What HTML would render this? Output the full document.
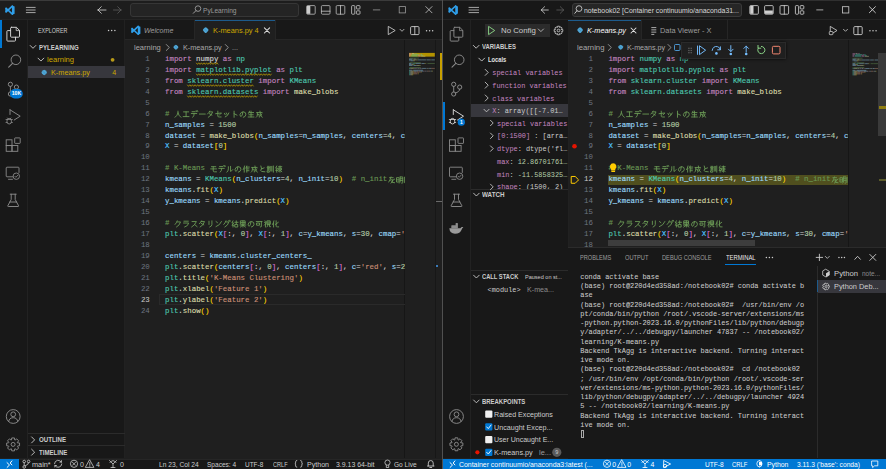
<!DOCTYPE html>
<html><head><meta charset="utf-8">
<style>
*{margin:0;padding:0;box-sizing:border-box}
html,body{width:886px;height:469px;overflow:hidden;background:#181818}
body{position:relative;font-family:"Liberation Sans",sans-serif;color:#cccccc}
.a{position:absolute}
.tx{position:absolute;white-space:pre}
svg{position:absolute;overflow:visible}
.ln{position:absolute;-webkit-text-stroke:0.12px currentColor;white-space:pre;font-family:"Liberation Mono",monospace;font-size:7.42px;line-height:10.97px;height:10.97px;color:#d4d4d4}
.num{position:absolute;text-align:right;font-family:"Liberation Mono",monospace;font-size:7.42px;line-height:10.97px;height:10.97px;color:#6e7681}
.k{color:#c586c0}.t{color:#4ec9b0}.v{color:#9cdcfe}.f{color:#dcdcaa}.n{color:#b5cea8}.s{color:#ce9178}.c{color:#6a9955}.b1{color:#ffd700}.b2{color:#da70d6}.b3{color:#179fff}.cst{color:#4fc1ff}
.m{font-family:"Liberation Mono",monospace}
</style></head><body>
<div class="a" style="left:0px;top:0px;width:442px;height:469px;background:#1f1f1f;"></div><div class="a" style="left:0px;top:0px;width:442px;height:20px;background:#1d1d1d;"></div><div class="a" style="left:0px;top:0px;width:442px;height:1px;background:#3b3b3b;"></div><div class="a" style="left:0px;top:19px;width:442px;height:1px;background:#242424;"></div><div class="a" style="left:0px;top:20px;width:27px;height:438px;background:#181818;"></div><div class="a" style="left:0px;top:20px;width:1.5px;height:28px;background:#0078d4;"></div><div class="a" style="left:27px;top:20px;width:98px;height:438px;background:#181818;"></div><div class="a" style="left:124px;top:20px;width:1px;height:438px;background:#212121;"></div><div class="a" style="left:125px;top:20px;width:317px;height:20px;background:#181818;"></div><div class="a" style="left:125px;top:39px;width:317px;height:1px;background:#262626;"></div><div class="a" style="left:194px;top:20px;width:80.5px;height:20px;background:#1f1f1f;"></div><div class="a" style="left:194px;top:19.8px;width:80.5px;height:1.6px;background:#1d5b8c;"></div><div class="a" style="left:193.5px;top:20px;width:0.8px;height:20px;background:#262626;"></div><div class="a" style="left:274.5px;top:20px;width:0.8px;height:20px;background:#262626;"></div><div class="a" style="left:0px;top:458.6px;width:442px;height:11px;background:#181818;"></div><div class="a" style="left:0px;top:458.6px;width:442px;height:0.8px;background:#262626;"></div><div class="a" style="left:0px;top:458.6px;width:19.3px;height:11px;background:#0078d4;"></div><div class="a" style="left:27px;top:65.5px;width:97.5px;height:12.7px;background:#37373d;"></div><div class="a" style="left:27px;top:433px;width:98px;height:1px;background:#2b2b2b;"></div><div class="a" style="left:27px;top:445px;width:98px;height:1px;background:#2b2b2b;"></div><div class="a" style="left:129.5px;top:3px;width:169px;height:14px;background:#242424;border:1px solid #363636;border-radius:3px;"></div><div class="a" style="left:404px;top:40px;width:1px;height:418px;background:#161616;"></div><div class="a" style="left:435px;top:40px;width:1px;height:418px;background:#171717;"></div><div class="a" style="left:440.3px;top:53.2px;width:1.8px;height:26.8px;background:#c8a000;"></div><div class="a" style="left:436px;top:200.6px;width:6px;height:1.2px;background:#6a6a6a;"></div><div class="a" style="left:436.2px;top:265px;width:1.4px;height:2.2px;background:#3a7ab8;"></div><div class="a" style="left:158.5px;top:294.255px;width:246px;height:10.97px;background:transparent;border:1px solid #2a2a2a;border-right:none;"></div><div class="tx" style="left:203.30px;top:4.60px;font-size:6.8px;line-height:12px;color:#9a9a9a;transform:scaleX(0.974);transform-origin:0 0;">PyLearning</div><div class="tx" style="left:38.40px;top:24.80px;font-size:6.5px;line-height:12px;color:#cccccc;transform:scaleX(0.830);transform-origin:0 0;">EXPLORER</div><div class="tx" style="left:38.80px;top:41.50px;font-size:6.5px;line-height:12px;color:#cccccc;font-weight:bold;transform:scaleX(0.932);transform-origin:0 0;">PYLEARNING</div><div class="tx" style="left:46.70px;top:54.20px;font-size:7.4px;line-height:12px;color:#cca700;transform:scaleX(1.029);transform-origin:0 0;">learning</div><div class="tx" style="left:51.20px;top:66.90px;font-size:7.3px;line-height:12px;color:#cca700;transform:scaleX(1.001);transform-origin:0 0;">K-means.py</div><div class="tx" style="left:112.20px;top:66.90px;font-size:7.1px;line-height:12px;color:#cca700;">4</div><div class="tx" style="left:38.60px;top:433.70px;font-size:6.5px;line-height:12px;color:#cccccc;font-weight:bold;transform:scaleX(0.946);transform-origin:0 0;">OUTLINE</div><div class="tx" style="left:38.60px;top:446.60px;font-size:6.5px;line-height:12px;color:#cccccc;font-weight:bold;transform:scaleX(0.936);transform-origin:0 0;">TIMELINE</div><div class="tx" style="left:144.40px;top:25.10px;font-size:7.1px;line-height:12px;color:#9d9d9d;font-style:italic;transform:scaleX(0.998);transform-origin:0 0;">Welcome</div><div class="tx" style="left:213.00px;top:25.10px;font-size:7.3px;line-height:12px;color:#cca700;transform:scaleX(1.015);transform-origin:0 0;">K-means.py 4</div><div class="tx" style="left:134.40px;top:42.10px;font-size:7.2px;line-height:12px;color:#a9a9a9;transform:scaleX(1.046);transform-origin:0 0;">learning</div><div class="tx" style="left:183.20px;top:42.10px;font-size:7.2px;line-height:12px;color:#a9a9a9;transform:scaleX(1.010);transform-origin:0 0;">K-means.py</div><div class="tx" style="left:232.00px;top:42.10px;font-size:7.2px;line-height:12px;color:#a9a9a9;">...</div><div class="tx" style="left:32.30px;top:458.90px;font-size:7.0px;line-height:11px;color:#cccccc;transform:scaleX(1.045);transform-origin:0 0;">main*</div><div class="tx" style="left:80.00px;top:458.90px;font-size:7.0px;line-height:11px;color:#cccccc;">0</div><div class="tx" style="left:96.00px;top:458.90px;font-size:7.0px;line-height:11px;color:#cccccc;">4</div><div class="tx" style="left:120.00px;top:458.90px;font-size:7.0px;line-height:11px;color:#cccccc;">0</div><div class="tx" style="left:158.90px;top:458.90px;font-size:7.0px;line-height:11px;color:#cccccc;transform:scaleX(0.953);transform-origin:0 0;">Ln 23, Col 24</div><div class="tx" style="left:206.90px;top:458.90px;font-size:7.0px;line-height:11px;color:#cccccc;transform:scaleX(0.935);transform-origin:0 0;">Spaces: 4</div><div class="tx" style="left:244.80px;top:458.90px;font-size:7.0px;line-height:11px;color:#cccccc;transform:scaleX(0.918);transform-origin:0 0;">UTF-8</div><div class="tx" style="left:272.50px;top:458.90px;font-size:7.0px;line-height:11px;color:#cccccc;transform:scaleX(0.799);transform-origin:0 0;">CRLF</div><div class="tx" style="left:306.50px;top:458.90px;font-size:7.0px;line-height:11px;color:#cccccc;transform:scaleX(1.009);transform-origin:0 0;">Python</div><div class="tx" style="left:336.30px;top:458.90px;font-size:7.0px;line-height:11px;color:#cccccc;transform:scaleX(0.989);transform-origin:0 0;">3.9.13 64-bit</div><div class="tx" style="left:393.60px;top:458.90px;font-size:7.0px;line-height:11px;color:#cccccc;transform:scaleX(0.941);transform-origin:0 0;">Go Live</div><div class="a" style="left:125px;top:40px;width:279.5px;height:418px;overflow:hidden"><div class="num" style="left:4.80px;width:20px;top:13.72px;color:#6e7681">1</div><div class="ln" style="left:40.00px;top:13.72px;"><span class="k">import</span> numpy <span class="k">as</span> <span class="t">np</span></div><div class="num" style="left:4.80px;width:20px;top:24.69px;color:#6e7681">2</div><div class="ln" style="left:40.00px;top:24.69px;"><span class="k">import</span> <span class="t">matplotlib.pyplot</span> <span class="k">as</span> <span class="t">plt</span></div><div class="num" style="left:4.80px;width:20px;top:35.66px;color:#6e7681">3</div><div class="ln" style="left:40.00px;top:35.66px;"><span class="k">from</span> <span class="t">sklearn.cluster</span> <span class="k">import</span> <span class="t">KMeans</span></div><div class="num" style="left:4.80px;width:20px;top:46.63px;color:#6e7681">4</div><div class="ln" style="left:40.00px;top:46.63px;"><span class="k">from</span> <span class="t">sklearn.datasets</span> <span class="k">import</span> <span class="f">make_blobs</span></div><div class="num" style="left:4.80px;width:20px;top:57.60px;color:#6e7681">5</div><div class="num" style="left:4.80px;width:20px;top:68.57px;color:#6e7681">6</div><div class="ln" style="left:40.00px;top:68.57px;"><span class="c"># </span></div><div class="num" style="left:4.80px;width:20px;top:79.54px;color:#6e7681">7</div><div class="ln" style="left:40.00px;top:79.54px;"><span class="v">n_samples</span> = <span class="n">1500</span></div><div class="num" style="left:4.80px;width:20px;top:90.50px;color:#6e7681">8</div><div class="ln" style="left:40.00px;top:90.50px;"><span class="v">dataset</span> = <span class="f">make_blobs</span><span class="b1">(</span><span class="v">n_samples</span>=<span class="v">n_samples</span>, <span class="v">centers</span>=<span class="n">4</span>, <span class="v">cluster_std</span>=<span class="n">0.60</span><span class="b1">)</span></div><div class="num" style="left:4.80px;width:20px;top:101.47px;color:#6e7681">9</div><div class="ln" style="left:40.00px;top:101.47px;"><span class="cst">X</span> = <span class="v">dataset</span><span class="b1">[</span><span class="n">0</span><span class="b1">]</span></div><div class="num" style="left:4.80px;width:20px;top:112.44px;color:#6e7681">10</div><div class="num" style="left:4.80px;width:20px;top:123.41px;color:#6e7681">11</div><div class="ln" style="left:40.00px;top:123.41px;"><span class="c"># K-Means </span></div><div class="num" style="left:4.80px;width:20px;top:134.38px;color:#6e7681">12</div><div class="ln" style="left:40.00px;top:134.38px;"><span class="v">kmeans</span> = <span class="t">KMeans</span><span class="b1">(</span><span class="v">n_clusters</span>=<span class="n">4</span>, <span class="v">n_init</span>=<span class="n">10</span><span class="b1">)</span>  <span class="c"># n_init</span></div><div class="num" style="left:4.80px;width:20px;top:145.36px;color:#6e7681">13</div><div class="ln" style="left:40.00px;top:145.36px;"><span class="v">kmeans</span>.<span class="f">fit</span><span class="b1">(</span><span class="cst">X</span><span class="b1">)</span></div><div class="num" style="left:4.80px;width:20px;top:156.32px;color:#6e7681">14</div><div class="ln" style="left:40.00px;top:156.32px;"><span class="v">y_kmeans</span> = <span class="v">kmeans</span>.<span class="f">predict</span><span class="b1">(</span><span class="cst">X</span><span class="b1">)</span></div><div class="num" style="left:4.80px;width:20px;top:167.30px;color:#6e7681">15</div><div class="num" style="left:4.80px;width:20px;top:178.26px;color:#6e7681">16</div><div class="ln" style="left:40.00px;top:178.26px;"><span class="c"># </span></div><div class="num" style="left:4.80px;width:20px;top:189.24px;color:#6e7681">17</div><div class="ln" style="left:40.00px;top:189.24px;"><span class="t">plt</span>.<span class="f">scatter</span><span class="b1">(</span><span class="cst">X</span><span class="b2">[</span>:, <span class="n">0</span><span class="b2">]</span>, <span class="cst">X</span><span class="b2">[</span>:, <span class="n">1</span><span class="b2">]</span>, <span class="v">c</span>=<span class="v">y_kmeans</span>, <span class="v">s</span>=<span class="n">30</span>, <span class="v">cmap</span>=<span class="s">&#x27;viridis&#x27;</span><span class="b1">)</span></div><div class="num" style="left:4.80px;width:20px;top:200.20px;color:#6e7681">18</div><div class="num" style="left:4.80px;width:20px;top:211.18px;color:#6e7681">19</div><div class="ln" style="left:40.00px;top:211.18px;"><span class="v">centers</span> = <span class="v">kmeans</span>.<span class="v">cluster_centers_</span></div><div class="num" style="left:4.80px;width:20px;top:222.14px;color:#6e7681">20</div><div class="ln" style="left:40.00px;top:222.14px;"><span class="t">plt</span>.<span class="f">scatter</span><span class="b1">(</span><span class="v">centers</span><span class="b2">[</span>:, <span class="n">0</span><span class="b2">]</span>, <span class="v">centers</span><span class="b2">[</span>:, <span class="n">1</span><span class="b2">]</span>, <span class="v">c</span>=<span class="s">&#x27;red&#x27;</span>, <span class="v">s</span>=<span class="n">200</span><span class="b1">)</span></div><div class="num" style="left:4.80px;width:20px;top:233.12px;color:#6e7681">21</div><div class="ln" style="left:40.00px;top:233.12px;"><span class="t">plt</span>.<span class="f">title</span><span class="b1">(</span><span class="s">&#x27;K-Means Clustering&#x27;</span><span class="b1">)</span></div><div class="num" style="left:4.80px;width:20px;top:244.08px;color:#6e7681">22</div><div class="ln" style="left:40.00px;top:244.08px;"><span class="t">plt</span>.<span class="f">xlabel</span><span class="b1">(</span><span class="s">&#x27;Feature 1&#x27;</span><span class="b1">)</span></div><div class="num" style="left:4.80px;width:20px;top:255.06px;color:#cccccc">23</div><div class="ln" style="left:40.00px;top:255.06px;"><span class="t">plt</span>.<span class="f">ylabel</span><span class="b1">(</span><span class="s">&#x27;Feature 2&#x27;</span><span class="b1">)</span></div><div class="num" style="left:4.80px;width:20px;top:266.02px;color:#6e7681">24</div><div class="ln" style="left:40.00px;top:266.02px;"><span class="t">plt</span>.<span class="f">show</span><span class="b1">()</span></div><svg width="280" height="418" style="left:0;top:0"><path transform="translate(49.32,70.40) scale(0.730)" d="M5 1 V3 Q4.5 7 1 9.5 M5 3 Q5.5 7 9 9.5" stroke="#6a9955" stroke-width="1.23" fill="none" stroke-linecap="round" stroke-linejoin="round"/><path transform="translate(57.44,70.40) scale(0.730)" d="M1.5 2 H8.5 M5 2 V8.5 M1 8.5 H9" stroke="#6a9955" stroke-width="1.23" fill="none" stroke-linecap="round" stroke-linejoin="round"/><path transform="translate(65.56,70.40) scale(0.730)" d="M2 1.8 H6.5 M1 4.3 H8.5 M5 4.3 Q5 8 3 9.5 M7.8 0.4 L8.5 1.8 M9.2 0.2 L9.9 1.5" stroke="#6a9955" stroke-width="1.23" fill="none" stroke-linecap="round" stroke-linejoin="round"/><path transform="translate(73.68,70.40) scale(0.730)" d="M1 5 H9" stroke="#6a9955" stroke-width="1.23" fill="none" stroke-linecap="round" stroke-linejoin="round"/><path transform="translate(81.80,70.40) scale(0.730)" d="M4 1 Q3 3 1 5 M3.5 2 H8 Q7 6.5 2 9.5 M3.5 4.5 L7 6.5" stroke="#6a9955" stroke-width="1.23" fill="none" stroke-linecap="round" stroke-linejoin="round"/><path transform="translate(89.92,70.40) scale(0.730)" d="M1 4.5 L9 3.5 Q8 5 6.5 6 M4 1 V8 Q4 9 6 9 H8.5" stroke="#6a9955" stroke-width="1.23" fill="none" stroke-linecap="round" stroke-linejoin="round"/><path transform="translate(98.04,70.40) scale(0.730)" d="M2 4 L3 6 M4.5 3.5 L5.5 5.5 M8 3.5 Q7 7.5 3 9" stroke="#6a9955" stroke-width="1.23" fill="none" stroke-linecap="round" stroke-linejoin="round"/><path transform="translate(106.16,70.40) scale(0.730)" d="M4 1 V9.5 M4 4.5 L8 6.5" stroke="#6a9955" stroke-width="1.23" fill="none" stroke-linecap="round" stroke-linejoin="round"/><path transform="translate(114.28,70.40) scale(0.730)" d="M5 2 Q4.5 7.5 2.5 8.5 Q0.8 8 1 5.5 Q1.8 2 6 2 Q9.5 2.5 9 6 Q8.5 9 5.5 9.5" stroke="#6a9955" stroke-width="1.23" fill="none" stroke-linecap="round" stroke-linejoin="round"/><path transform="translate(122.40,70.40) scale(0.730)" d="M3 1 L1.5 4 M2.5 3 H8.5 M5 1 V9 M2 6 H8 M1 9 H9" stroke="#6a9955" stroke-width="1.23" fill="none" stroke-linecap="round" stroke-linejoin="round"/><path transform="translate(130.52,70.40) scale(0.730)" d="M1.5 3 H9 M2.5 3 V6 Q2.5 8.5 1 9.5 M2.5 5.5 H5 V8 M6 1 Q6 7 9 9.5 M8.5 5 Q7 8 5 9.5" stroke="#6a9955" stroke-width="1.23" fill="none" stroke-linecap="round" stroke-linejoin="round"/><path transform="translate(84.94,125.25) scale(0.730)" d="M2 2 H8 M1 5 H9 M4.5 2 V8 Q4.5 9 6.5 9 H9" stroke="#6a9955" stroke-width="1.23" fill="none" stroke-linecap="round" stroke-linejoin="round"/><path transform="translate(93.06,125.25) scale(0.730)" d="M2 1.8 H6.5 M1 4.3 H8.5 M5 4.3 Q5 8 3 9.5 M7.8 0.4 L8.5 1.8 M9.2 0.2 L9.9 1.5" stroke="#6a9955" stroke-width="1.23" fill="none" stroke-linecap="round" stroke-linejoin="round"/><path transform="translate(101.18,125.25) scale(0.730)" d="M3 2 V5 Q3 8 1 9.5 M6 1.5 V8.5 Q7.5 8 9 6" stroke="#6a9955" stroke-width="1.23" fill="none" stroke-linecap="round" stroke-linejoin="round"/><path transform="translate(109.30,125.25) scale(0.730)" d="M5 2 Q4.5 7.5 2.5 8.5 Q0.8 8 1 5.5 Q1.8 2 6 2 Q9.5 2.5 9 6 Q8.5 9 5.5 9.5" stroke="#6a9955" stroke-width="1.23" fill="none" stroke-linecap="round" stroke-linejoin="round"/><path transform="translate(117.42,125.25) scale(0.730)" d="M3 1 Q2.5 4 1 6 M2.5 3.5 V9.5 M6 1 Q5.5 3 4.5 4 M5.5 2.5 H9.5 M6 2.5 V9.5 M6 5 H9 M6 7.5 H9" stroke="#6a9955" stroke-width="1.23" fill="none" stroke-linecap="round" stroke-linejoin="round"/><path transform="translate(125.54,125.25) scale(0.730)" d="M1.5 3 H9 M2.5 3 V6 Q2.5 8.5 1 9.5 M2.5 5.5 H5 V8 M6 1 Q6 7 9 9.5 M8.5 5 Q7 8 5 9.5" stroke="#6a9955" stroke-width="1.23" fill="none" stroke-linecap="round" stroke-linejoin="round"/><path transform="translate(133.66,125.25) scale(0.730)" d="M3 1 L4 5 M7.5 3.5 Q3 4.5 2.5 7 Q3 9 8.5 9" stroke="#6a9955" stroke-width="1.23" fill="none" stroke-linecap="round" stroke-linejoin="round"/><path transform="translate(141.78,125.25) scale(0.730)" d="M1 1.5 H3.5 M0.5 3 H4 M1 4.5 H3.5 M1 6 H3.5 M1 7.5 H3.5 V9.5 H1 Z M5.5 1.5 V8 M7 1.5 V8 M9 1 V9.5" stroke="#6a9955" stroke-width="1.23" fill="none" stroke-linecap="round" stroke-linejoin="round"/><path transform="translate(149.90,125.25) scale(0.730)" d="M2.5 1 L1 4 L3.5 4 L1 7 H4 M2.5 7 V9.5 M5 2 H9.5 M7 1 V9.5 M5 4 H9 V6.5 H5 Z M5 9 L6.5 7.5 M9.5 9 L8 7.5" stroke="#6a9955" stroke-width="1.23" fill="none" stroke-linecap="round" stroke-linejoin="round"/><path transform="translate(263.05,136.22) scale(0.730)" d="M2 2 H7 M4 1 Q3 5 1 8 M3 5.5 Q5 4 6.5 5 Q7 8 4 9.5 M9 4 L5 6.5 Q4 9 9 9" stroke="#6a9955" stroke-width="1.23" fill="none" stroke-linecap="round" stroke-linejoin="round"/><path transform="translate(271.17,136.22) scale(0.730)" d="M1 2 H4 V8 H1 Z M1 5 H4 M5.5 1 H9 V9 Q9 9.8 7.5 9.5 M5.5 1 V6 Q5.5 8.5 4.5 9.5 M5.5 3.5 H9 M5.5 6 H9" stroke="#6a9955" stroke-width="1.23" fill="none" stroke-linecap="round" stroke-linejoin="round"/><path transform="translate(279.29,136.22) scale(0.730)" d="M1 1 H9 V9 H1 Z" stroke="#6a9955" stroke-width="1.23" fill="none" stroke-linecap="round" stroke-linejoin="round"/><path transform="translate(287.41,136.22) scale(0.730)" d="M1 1 H9 V9 H1 Z" stroke="#6a9955" stroke-width="1.23" fill="none" stroke-linecap="round" stroke-linejoin="round"/><path transform="translate(295.53,136.22) scale(0.730)" d="M1 1 H9 V9 H1 Z" stroke="#6a9955" stroke-width="1.23" fill="none" stroke-linecap="round" stroke-linejoin="round"/><path transform="translate(303.65,136.22) scale(0.730)" d="M1 1 H9 V9 H1 Z" stroke="#6a9955" stroke-width="1.23" fill="none" stroke-linecap="round" stroke-linejoin="round"/><path transform="translate(311.77,136.22) scale(0.730)" d="M1 1 H9 V9 H1 Z" stroke="#6a9955" stroke-width="1.23" fill="none" stroke-linecap="round" stroke-linejoin="round"/><path transform="translate(49.32,180.10) scale(0.730)" d="M4 1 Q3 4 1 6 M4 2.5 H8.5 Q7.5 7 3 9.5" stroke="#6a9955" stroke-width="1.23" fill="none" stroke-linecap="round" stroke-linejoin="round"/><path transform="translate(57.44,180.10) scale(0.730)" d="M2 1.5 H8 M1.5 4 H8.5 Q8 8 3 9.5" stroke="#6a9955" stroke-width="1.23" fill="none" stroke-linecap="round" stroke-linejoin="round"/><path transform="translate(65.56,180.10) scale(0.730)" d="M2 2 H8 Q6 7 1.5 9.5 M5.5 6 L9 9" stroke="#6a9955" stroke-width="1.23" fill="none" stroke-linecap="round" stroke-linejoin="round"/><path transform="translate(73.68,180.10) scale(0.730)" d="M4 1 Q3 3 1 5 M3.5 2 H8 Q7 6.5 2 9.5 M3.5 4.5 L7 6.5" stroke="#6a9955" stroke-width="1.23" fill="none" stroke-linecap="round" stroke-linejoin="round"/><path transform="translate(81.80,180.10) scale(0.730)" d="M3 1.5 V6 M7 1 V6 Q7 8.5 4 9.5" stroke="#6a9955" stroke-width="1.23" fill="none" stroke-linecap="round" stroke-linejoin="round"/><path transform="translate(89.92,180.10) scale(0.730)" d="M1.5 2 L3.5 3.5 M1.5 9 Q7 7 9 2" stroke="#6a9955" stroke-width="1.23" fill="none" stroke-linecap="round" stroke-linejoin="round"/><path transform="translate(98.04,180.10) scale(0.730)" d="M4 1 Q3 4 1 6 M4 2.5 H8 Q7 7 2.5 9.5 M8 0.4 L8.6 1.7 M9.3 0.2 L9.9 1.4" stroke="#6a9955" stroke-width="1.23" fill="none" stroke-linecap="round" stroke-linejoin="round"/><path transform="translate(106.16,180.10) scale(0.730)" d="M2.5 1 L1 4 L3.5 4 L1 7 H4 M2.5 7 V9.5 M5 3 H9.5 M7 1 V5 M5.5 6 H9 V9.5 H5.5 Z" stroke="#6a9955" stroke-width="1.23" fill="none" stroke-linecap="round" stroke-linejoin="round"/><path transform="translate(114.28,180.10) scale(0.730)" d="M2 1 H8 V5.5 H2 Z M2 3.2 H8 M5 1 V9.5 M1 6.8 H9 M5 6.8 L1.5 9.5 M5 6.8 L8.5 9.5" stroke="#6a9955" stroke-width="1.23" fill="none" stroke-linecap="round" stroke-linejoin="round"/><path transform="translate(122.40,180.10) scale(0.730)" d="M5 2 Q4.5 7.5 2.5 8.5 Q0.8 8 1 5.5 Q1.8 2 6 2 Q9.5 2.5 9 6 Q8.5 9 5.5 9.5" stroke="#6a9955" stroke-width="1.23" fill="none" stroke-linecap="round" stroke-linejoin="round"/><path transform="translate(130.52,180.10) scale(0.730)" d="M1 2 H9 M8 2 V9 Q8 9.8 6.5 9.3 M2 4 H5.5 V7 H2 Z" stroke="#6a9955" stroke-width="1.23" fill="none" stroke-linecap="round" stroke-linejoin="round"/><path transform="translate(138.64,180.10) scale(0.730)" d="M2 1 L3 2 M1 3 H3.5 Q2.5 6 1 7 M2.5 5 V9.5 M5 1 H9 V6 H5 Z M5 2.7 H9 M5 4.3 H9 M6 6 Q6 8.5 4.5 9.5 M8 6 V9 H9.5" stroke="#6a9955" stroke-width="1.23" fill="none" stroke-linecap="round" stroke-linejoin="round"/><path transform="translate(146.76,180.10) scale(0.730)" d="M3 1 Q2.5 4 1 6 M2.5 3.5 V9.5 M6 1 V8.5 Q6 9.3 8 9.3 H9.5 M9 3 L5 6" stroke="#6a9955" stroke-width="1.23" fill="none" stroke-linecap="round" stroke-linejoin="round"/><polyline points="71.17 22.80 72.47 24.40 73.77 22.80 75.07 24.40 76.37 22.80 77.67 24.40 78.97 22.80 80.27 24.40 81.57 22.80 82.87 24.40 84.17 22.80 85.47 24.40 86.77 22.80 88.07 24.40 89.37 22.80 90.67 24.40 91.97 22.80 93.27 24.40" stroke="#cca700" stroke-width="0.7" fill="none"/><polyline points="71.17 33.77 72.47 35.37 73.77 33.77 75.07 35.37 76.37 33.77 77.67 35.37 78.97 33.77 80.27 35.37 81.57 33.77 82.87 35.37 84.17 33.77 85.47 35.37 86.77 33.77 88.07 35.37 89.37 33.77 90.67 35.37 91.97 33.77 93.27 35.37 94.57 33.77 95.87 35.37 97.17 33.77 98.47 35.37 99.77 33.77 101.07 35.37 102.37 33.77 103.67 35.37 104.97 33.77 106.27 35.37 107.57 33.77 108.87 35.37 110.17 33.77 111.47 35.37 112.77 33.77 114.07 35.37 115.37 33.77 116.67 35.37 117.97 33.77 119.27 35.37 120.57 33.77 121.87 35.37 123.17 33.77 124.47 35.37 125.77 33.77 127.07 35.37 128.37 33.77 129.67 35.37 130.97 33.77 132.27 35.37 133.57 33.77 134.87 35.37 136.17 33.77 137.47 35.37 138.77 33.77 140.07 35.37 141.37 33.77 142.67 35.37 143.97 33.77 145.27 35.37 146.57 33.77" stroke="#cca700" stroke-width="0.7" fill="none"/><polyline points="62.26 44.74 63.56 46.34 64.86 44.74 66.16 46.34 67.46 44.74 68.76 46.34 70.06 44.74 71.36 46.34 72.66 44.74 73.96 46.34 75.26 44.74 76.56 46.34 77.86 44.74 79.16 46.34 80.46 44.74 81.76 46.34 83.06 44.74 84.36 46.34 85.66 44.74 86.96 46.34 88.26 44.74 89.56 46.34 90.86 44.74 92.16 46.34 93.46 44.74 94.76 46.34 96.06 44.74 97.36 46.34 98.66 44.74 99.96 46.34 101.26 44.74 102.56 46.34 103.86 44.74 105.16 46.34 106.46 44.74 107.76 46.34 109.06 44.74 110.36 46.34 111.66 44.74 112.96 46.34 114.26 44.74 115.56 46.34 116.86 44.74 118.16 46.34 119.46 44.74 120.76 46.34 122.06 44.74 123.36 46.34 124.66 44.74 125.96 46.34 127.26 44.74 128.56 46.34" stroke="#cca700" stroke-width="0.7" fill="none"/><polyline points="62.26 55.71 63.56 57.31 64.86 55.71 66.16 57.31 67.46 55.71 68.76 57.31 70.06 55.71 71.36 57.31 72.66 55.71 73.96 57.31 75.26 55.71 76.56 57.31 77.86 55.71 79.16 57.31 80.46 55.71 81.76 57.31 83.06 55.71 84.36 57.31 85.66 55.71 86.96 57.31 88.26 55.71 89.56 57.31 90.86 55.71 92.16 57.31 93.46 55.71 94.76 57.31 96.06 55.71 97.36 57.31 98.66 55.71 99.96 57.31 101.26 55.71 102.56 57.31 103.86 55.71 105.16 57.31 106.46 55.71 107.76 57.31 109.06 55.71 110.36 57.31 111.66 55.71 112.96 57.31 114.26 55.71 115.56 57.31 116.86 55.71 118.16 57.31 119.46 55.71 120.76 57.31 122.06 55.71 123.36 57.31 124.66 55.71 125.96 57.31 127.26 55.71 128.56 57.31 129.86 55.71 131.16 57.31 132.46 55.71" stroke="#cca700" stroke-width="0.7" fill="none"/></svg></div><div class="a" style="left:27px;top:20px;width:0.8px;height:438px;background:#222222;"></div><div class="a" style="left:442px;top:0px;width:1px;height:469px;background:#505050;"></div><div class="a" style="left:443px;top:0px;width:443px;height:469px;background:#1f1f1f;"></div><div class="a" style="left:443px;top:0px;width:443px;height:20px;background:#181818;"></div><div class="a" style="left:443px;top:0px;width:443px;height:1px;background:#303030;"></div><div class="a" style="left:443px;top:19px;width:443px;height:1px;background:#242424;"></div><div class="a" style="left:443px;top:20px;width:27px;height:438px;background:#181818;"></div><div class="a" style="left:443px;top:102px;width:1.5px;height:28px;background:#0078d4;"></div><div class="a" style="left:470px;top:20px;width:98px;height:438px;background:#181818;"></div><div class="a" style="left:567.5px;top:20px;width:1px;height:438px;background:#212121;"></div><div class="a" style="left:568px;top:20px;width:318px;height:20px;background:#181818;"></div><div class="a" style="left:568px;top:39px;width:318px;height:1px;background:#262626;"></div><div class="a" style="left:568px;top:20px;width:73px;height:20px;background:#1f1f1f;"></div><div class="a" style="left:568px;top:19.8px;width:73px;height:1.6px;background:#1d5b8c;"></div><div class="a" style="left:641px;top:20px;width:0.8px;height:20px;background:#262626;"></div><div class="a" style="left:727px;top:20px;width:0.8px;height:20px;background:#262626;"></div><div class="a" style="left:572.4px;top:3.4px;width:169.3px;height:13.6px;background:#262626;border:1px solid #3a3a3a;border-radius:3px;"></div><div class="tx" style="left:584.40px;top:4.70px;font-size:6.9px;line-height:12px;color:#d8d8d8;transform:scaleX(1.003);transform-origin:0 0;">notebook02 [Container continuumio/anaconda31...</div><div class="a" style="left:484.6px;top:24.1px;width:65.3px;height:12.8px;background:#2b2b2b;"></div><div class="tx" style="left:500.80px;top:25.10px;font-size:7.4px;line-height:12px;color:#cccccc;transform:scaleX(1.061);transform-origin:0 0;">No Config</div><div class="tx" style="left:481.50px;top:41.40px;font-size:6.5px;line-height:12px;color:#cccccc;font-weight:bold;transform:scaleX(0.914);transform-origin:0 0;">VARIABLES</div><div class="tx" style="left:487.60px;top:54.20px;font-size:6.8px;line-height:12px;color:#e0e0e0;font-weight:bold;transform:scaleX(0.849);transform-origin:0 0;">Locals</div><div class="tx" style="left:492.30px;top:67.00px;font-size:6.9px;line-height:12px;color:#c586c0;font-family:'Liberation Mono',monospace;">special variables</div><div class="tx" style="left:492.30px;top:79.80px;font-size:6.9px;line-height:12px;color:#c586c0;font-family:'Liberation Mono',monospace;">function variables</div><div class="tx" style="left:492.30px;top:92.60px;font-size:6.9px;line-height:12px;color:#c586c0;font-family:'Liberation Mono',monospace;">class variables</div><div class="a" style="left:470px;top:104.3px;width:97.5px;height:12.6px;background:#37373d;"></div><div class="tx m" style="left:492.3px;top:105.2px;font-size:6.9px;line-height:12px;color:#cccccc"><span style="color:#c586c0">X</span>: array([[-7.01…</div><div class="a" style="left:470px;top:116.9px;width:98px;height:72px;overflow:hidden"><div class="tx m" style="left:27px;top:0.70px;font-size:6.9px;line-height:12px;color:#cccccc"><span style="color:#c586c0">special variables</span></div><div class="tx m" style="left:27px;top:13.50px;font-size:6.9px;line-height:12px;color:#cccccc"><span style="color:#c586c0">[0:1500]</span> : [arra…</div><div class="tx m" style="left:27px;top:26.30px;font-size:6.9px;line-height:12px;color:#cccccc"><span style="color:#c586c0">dtype</span>: dtype('fl…</div><div class="tx m" style="left:27px;top:39.10px;font-size:6.9px;line-height:12px;color:#cccccc"><span style="color:#c586c0">max</span>: <span style="color:#b5cea8">12.86701761…</span></div><div class="tx m" style="left:27px;top:51.80px;font-size:6.9px;line-height:12px;color:#cccccc"><span style="color:#c586c0">min</span>: <span style="color:#b5cea8">-11.5858325…</span></div><div class="tx m" style="left:27px;top:64.60px;font-size:6.9px;line-height:12px;color:#cccccc"><span style="color:#c586c0">shape</span>: (1500, 2)</div></div><div class="a" style="left:470px;top:188.8px;width:98px;height:1px;background:#2b2b2b;"></div><div class="tx" style="left:482.00px;top:189.20px;font-size:6.5px;line-height:12px;color:#cccccc;font-weight:bold;transform:scaleX(0.964);transform-origin:0 0;">WATCH</div><div class="a" style="left:470px;top:270px;width:98px;height:1px;background:#2b2b2b;"></div><div class="tx" style="left:481.70px;top:271.20px;font-size:6.5px;line-height:12px;color:#cccccc;font-weight:bold;transform:scaleX(0.887);transform-origin:0 0;">CALL STACK</div><div class="tx" style="left:524.70px;top:271.40px;font-size:6.0px;line-height:12px;color:#cccccc;transform:scaleX(0.922);transform-origin:0 0;">Paused on st...</div><div class="tx" style="left:487.50px;top:283.60px;font-size:6.9px;line-height:12px;color:#cccccc;font-family:'Liberation Mono',monospace;">&lt;module&gt;</div><div class="tx" style="left:526.50px;top:283.80px;font-size:7.0px;line-height:12px;color:#8c8c8c;transform:scaleX(1.021);transform-origin:0 0;">K-mea...</div><div class="a" style="left:470px;top:394px;width:98px;height:1px;background:#2b2b2b;"></div><div class="tx" style="left:482.00px;top:396.00px;font-size:6.5px;line-height:12px;color:#cccccc;font-weight:bold;transform:scaleX(0.915);transform-origin:0 0;">BREAKPOINTS</div><div class="tx" style="left:493.80px;top:408.80px;font-size:7.1px;line-height:12px;color:#cccccc;transform:scaleX(1.002);transform-origin:0 0;">Raised Exceptions</div><div class="tx" style="left:493.80px;top:421.50px;font-size:7.1px;line-height:12px;color:#cccccc;transform:scaleX(1.008);transform-origin:0 0;">Uncaught Excep...</div><div class="tx" style="left:493.80px;top:434.20px;font-size:7.1px;line-height:12px;color:#cccccc;transform:scaleX(0.987);transform-origin:0 0;">User Uncaught E...</div><div class="tx" style="left:494.00px;top:446.90px;font-size:7.1px;line-height:12px;color:#cccccc;transform:scaleX(1.022);transform-origin:0 0;">K-means.py</div><div class="tx" style="left:539.00px;top:446.90px;font-size:7.0px;line-height:12px;color:#9d9d9d;transform:scaleX(1.064);transform-origin:0 0;">le...</div><div class="tx" style="left:587.00px;top:25.10px;font-size:7.3px;line-height:12px;color:#ffffff;font-style:italic;transform:scaleX(1.001);transform-origin:0 0;">K-means.py</div><div class="tx" style="left:660.20px;top:25.10px;font-size:7.2px;line-height:12px;color:#9d9d9d;transform:scaleX(1.024);transform-origin:0 0;">Data Viewer - X</div><div class="tx" style="left:577.00px;top:42.10px;font-size:7.2px;line-height:12px;color:#a9a9a9;transform:scaleX(1.073);transform-origin:0 0;">learning</div><div class="tx" style="left:626.80px;top:42.10px;font-size:7.2px;line-height:12px;color:#a9a9a9;transform:scaleX(0.994);transform-origin:0 0;">K-means.py</div><div class="a" style="left:568px;top:40px;width:280px;height:207px;overflow:hidden"><div class="a" style="left:39.700000000000045px;top:134.685px;width:280px;height:10.370000000000001px;background:#504f1e;"></div><div class="num" style="left:5.00px;width:20px;top:13.72px;color:#6e7681">1</div><div class="ln" style="left:40.40px;top:13.72px;"><span class="k">import</span> <span class="t">numpy</span> <span class="k">as</span> <span class="t">np</span></div><div class="num" style="left:5.00px;width:20px;top:24.69px;color:#6e7681">2</div><div class="ln" style="left:40.40px;top:24.69px;"><span class="k">import</span> <span class="t">matplotlib.pyplot</span> <span class="k">as</span> <span class="t">plt</span></div><div class="num" style="left:5.00px;width:20px;top:35.66px;color:#6e7681">3</div><div class="ln" style="left:40.40px;top:35.66px;"><span class="k">from</span> <span class="t">sklearn.cluster</span> <span class="k">import</span> <span class="t">KMeans</span></div><div class="num" style="left:5.00px;width:20px;top:46.63px;color:#6e7681">4</div><div class="ln" style="left:40.40px;top:46.63px;"><span class="k">from</span> <span class="t">sklearn.datasets</span> <span class="k">import</span> <span class="f">make_blobs</span></div><div class="num" style="left:5.00px;width:20px;top:57.60px;color:#6e7681">5</div><div class="num" style="left:5.00px;width:20px;top:68.57px;color:#6e7681">6</div><div class="ln" style="left:40.40px;top:68.57px;"><span class="c"># </span></div><div class="num" style="left:5.00px;width:20px;top:79.54px;color:#6e7681">7</div><div class="ln" style="left:40.40px;top:79.54px;"><span class="v">n_samples</span> = <span class="n">1500</span></div><div class="num" style="left:5.00px;width:20px;top:90.50px;color:#6e7681">8</div><div class="ln" style="left:40.40px;top:90.50px;"><span class="v">dataset</span> = <span class="f">make_blobs</span><span class="b1">(</span><span class="v">n_samples</span>=<span class="v">n_samples</span>, <span class="v">centers</span>=<span class="n">4</span>, <span class="v">cluster_std</span>=<span class="n">0.60</span><span class="b1">)</span></div><div class="num" style="left:5.00px;width:20px;top:101.47px;color:#6e7681">9</div><div class="ln" style="left:40.40px;top:101.47px;"><span class="cst">X</span> = <span class="v">dataset</span><span class="b1">[</span><span class="n">0</span><span class="b1">]</span></div><div class="num" style="left:5.00px;width:20px;top:112.44px;color:#6e7681">10</div><div class="num" style="left:5.00px;width:20px;top:123.41px;color:#6e7681">11</div><div class="ln" style="left:40.40px;top:123.41px;"><span class="c"># K-Means </span></div><div class="num" style="left:5.00px;width:20px;top:134.38px;color:#cccccc">12</div><div class="ln" style="left:40.40px;top:134.38px;"><span class="v">kmeans</span> = <span class="t">KMeans</span><span class="b1">(</span><span class="v">n_clusters</span>=<span class="n">4</span>, <span class="v">n_init</span>=<span class="n">10</span><span class="b1">)</span>  <span class="c"># n_init</span></div><div class="num" style="left:5.00px;width:20px;top:145.36px;color:#6e7681">13</div><div class="ln" style="left:40.40px;top:145.36px;"><span class="v">kmeans</span>.<span class="f">fit</span><span class="b1">(</span><span class="cst">X</span><span class="b1">)</span></div><div class="num" style="left:5.00px;width:20px;top:156.32px;color:#6e7681">14</div><div class="ln" style="left:40.40px;top:156.32px;"><span class="v">y_kmeans</span> = <span class="v">kmeans</span>.<span class="f">predict</span><span class="b1">(</span><span class="cst">X</span><span class="b1">)</span></div><div class="num" style="left:5.00px;width:20px;top:167.30px;color:#6e7681">15</div><div class="num" style="left:5.00px;width:20px;top:178.26px;color:#6e7681">16</div><div class="ln" style="left:40.40px;top:178.26px;"><span class="c"># </span></div><div class="num" style="left:5.00px;width:20px;top:189.24px;color:#6e7681">17</div><div class="ln" style="left:40.40px;top:189.24px;"><span class="t">plt</span>.<span class="f">scatter</span><span class="b1">(</span><span class="cst">X</span><span class="b2">[</span>:, <span class="n">0</span><span class="b2">]</span>, <span class="cst">X</span><span class="b2">[</span>:, <span class="n">1</span><span class="b2">]</span>, <span class="v">c</span>=<span class="v">y_kmeans</span>, <span class="v">s</span>=<span class="n">30</span>, <span class="v">cmap</span>=<span class="s">&#x27;viridis&#x27;</span><span class="b1">)</span></div><div class="num" style="left:5.00px;width:20px;top:200.20px;color:#6e7681">18</div><div class="num" style="left:5.00px;width:20px;top:211.18px;color:#6e7681">19</div><div class="ln" style="left:40.40px;top:211.18px;"><span class="v">centers</span> = <span class="v">kmeans</span>.<span class="v">cluster_centers_</span></div><div class="num" style="left:5.00px;width:20px;top:222.14px;color:#6e7681">20</div><div class="ln" style="left:40.40px;top:222.14px;"><span class="t">plt</span>.<span class="f">scatter</span><span class="b1">(</span><span class="v">centers</span><span class="b2">[</span>:, <span class="n">0</span><span class="b2">]</span>, <span class="v">centers</span><span class="b2">[</span>:, <span class="n">1</span><span class="b2">]</span>, <span class="v">c</span>=<span class="s">&#x27;red&#x27;</span>, <span class="v">s</span>=<span class="n">200</span><span class="b1">)</span></div><div class="num" style="left:5.00px;width:20px;top:233.12px;color:#6e7681">21</div><div class="ln" style="left:40.40px;top:233.12px;"><span class="t">plt</span>.<span class="f">title</span><span class="b1">(</span><span class="s">&#x27;K-Means Clustering&#x27;</span><span class="b1">)</span></div><div class="num" style="left:5.00px;width:20px;top:244.08px;color:#6e7681">22</div><div class="ln" style="left:40.40px;top:244.08px;"><span class="t">plt</span>.<span class="f">xlabel</span><span class="b1">(</span><span class="s">&#x27;Feature 1&#x27;</span><span class="b1">)</span></div><div class="num" style="left:5.00px;width:20px;top:255.06px;color:#6e7681">23</div><div class="ln" style="left:40.40px;top:255.06px;"><span class="t">plt</span>.<span class="f">ylabel</span><span class="b1">(</span><span class="s">&#x27;Feature 2&#x27;</span><span class="b1">)</span></div><div class="num" style="left:5.00px;width:20px;top:266.02px;color:#6e7681">24</div><div class="ln" style="left:40.40px;top:266.02px;"><span class="t">plt</span>.<span class="f">show</span><span class="b1">()</span></div><div class="a" style="left:0;top:0;width:280px;height:207px;background:transparent"></div><svg width="280" height="207" style="left:0;top:0"><path transform="translate(49.72,70.40) scale(0.730)" d="M5 1 V3 Q4.5 7 1 9.5 M5 3 Q5.5 7 9 9.5" stroke="#6a9955" stroke-width="1.23" fill="none" stroke-linecap="round" stroke-linejoin="round"/><path transform="translate(57.84,70.40) scale(0.730)" d="M1.5 2 H8.5 M5 2 V8.5 M1 8.5 H9" stroke="#6a9955" stroke-width="1.23" fill="none" stroke-linecap="round" stroke-linejoin="round"/><path transform="translate(65.96,70.40) scale(0.730)" d="M2 1.8 H6.5 M1 4.3 H8.5 M5 4.3 Q5 8 3 9.5 M7.8 0.4 L8.5 1.8 M9.2 0.2 L9.9 1.5" stroke="#6a9955" stroke-width="1.23" fill="none" stroke-linecap="round" stroke-linejoin="round"/><path transform="translate(74.08,70.40) scale(0.730)" d="M1 5 H9" stroke="#6a9955" stroke-width="1.23" fill="none" stroke-linecap="round" stroke-linejoin="round"/><path transform="translate(82.20,70.40) scale(0.730)" d="M4 1 Q3 3 1 5 M3.5 2 H8 Q7 6.5 2 9.5 M3.5 4.5 L7 6.5" stroke="#6a9955" stroke-width="1.23" fill="none" stroke-linecap="round" stroke-linejoin="round"/><path transform="translate(90.32,70.40) scale(0.730)" d="M1 4.5 L9 3.5 Q8 5 6.5 6 M4 1 V8 Q4 9 6 9 H8.5" stroke="#6a9955" stroke-width="1.23" fill="none" stroke-linecap="round" stroke-linejoin="round"/><path transform="translate(98.44,70.40) scale(0.730)" d="M2 4 L3 6 M4.5 3.5 L5.5 5.5 M8 3.5 Q7 7.5 3 9" stroke="#6a9955" stroke-width="1.23" fill="none" stroke-linecap="round" stroke-linejoin="round"/><path transform="translate(106.56,70.40) scale(0.730)" d="M4 1 V9.5 M4 4.5 L8 6.5" stroke="#6a9955" stroke-width="1.23" fill="none" stroke-linecap="round" stroke-linejoin="round"/><path transform="translate(114.68,70.40) scale(0.730)" d="M5 2 Q4.5 7.5 2.5 8.5 Q0.8 8 1 5.5 Q1.8 2 6 2 Q9.5 2.5 9 6 Q8.5 9 5.5 9.5" stroke="#6a9955" stroke-width="1.23" fill="none" stroke-linecap="round" stroke-linejoin="round"/><path transform="translate(122.80,70.40) scale(0.730)" d="M3 1 L1.5 4 M2.5 3 H8.5 M5 1 V9 M2 6 H8 M1 9 H9" stroke="#6a9955" stroke-width="1.23" fill="none" stroke-linecap="round" stroke-linejoin="round"/><path transform="translate(130.92,70.40) scale(0.730)" d="M1.5 3 H9 M2.5 3 V6 Q2.5 8.5 1 9.5 M2.5 5.5 H5 V8 M6 1 Q6 7 9 9.5 M8.5 5 Q7 8 5 9.5" stroke="#6a9955" stroke-width="1.23" fill="none" stroke-linecap="round" stroke-linejoin="round"/><path transform="translate(85.34,125.25) scale(0.730)" d="M2 2 H8 M1 5 H9 M4.5 2 V8 Q4.5 9 6.5 9 H9" stroke="#6a9955" stroke-width="1.23" fill="none" stroke-linecap="round" stroke-linejoin="round"/><path transform="translate(93.46,125.25) scale(0.730)" d="M2 1.8 H6.5 M1 4.3 H8.5 M5 4.3 Q5 8 3 9.5 M7.8 0.4 L8.5 1.8 M9.2 0.2 L9.9 1.5" stroke="#6a9955" stroke-width="1.23" fill="none" stroke-linecap="round" stroke-linejoin="round"/><path transform="translate(101.58,125.25) scale(0.730)" d="M3 2 V5 Q3 8 1 9.5 M6 1.5 V8.5 Q7.5 8 9 6" stroke="#6a9955" stroke-width="1.23" fill="none" stroke-linecap="round" stroke-linejoin="round"/><path transform="translate(109.70,125.25) scale(0.730)" d="M5 2 Q4.5 7.5 2.5 8.5 Q0.8 8 1 5.5 Q1.8 2 6 2 Q9.5 2.5 9 6 Q8.5 9 5.5 9.5" stroke="#6a9955" stroke-width="1.23" fill="none" stroke-linecap="round" stroke-linejoin="round"/><path transform="translate(117.82,125.25) scale(0.730)" d="M3 1 Q2.5 4 1 6 M2.5 3.5 V9.5 M6 1 Q5.5 3 4.5 4 M5.5 2.5 H9.5 M6 2.5 V9.5 M6 5 H9 M6 7.5 H9" stroke="#6a9955" stroke-width="1.23" fill="none" stroke-linecap="round" stroke-linejoin="round"/><path transform="translate(125.94,125.25) scale(0.730)" d="M1.5 3 H9 M2.5 3 V6 Q2.5 8.5 1 9.5 M2.5 5.5 H5 V8 M6 1 Q6 7 9 9.5 M8.5 5 Q7 8 5 9.5" stroke="#6a9955" stroke-width="1.23" fill="none" stroke-linecap="round" stroke-linejoin="round"/><path transform="translate(134.06,125.25) scale(0.730)" d="M3 1 L4 5 M7.5 3.5 Q3 4.5 2.5 7 Q3 9 8.5 9" stroke="#6a9955" stroke-width="1.23" fill="none" stroke-linecap="round" stroke-linejoin="round"/><path transform="translate(142.18,125.25) scale(0.730)" d="M1 1.5 H3.5 M0.5 3 H4 M1 4.5 H3.5 M1 6 H3.5 M1 7.5 H3.5 V9.5 H1 Z M5.5 1.5 V8 M7 1.5 V8 M9 1 V9.5" stroke="#6a9955" stroke-width="1.23" fill="none" stroke-linecap="round" stroke-linejoin="round"/><path transform="translate(150.30,125.25) scale(0.730)" d="M2.5 1 L1 4 L3.5 4 L1 7 H4 M2.5 7 V9.5 M5 2 H9.5 M7 1 V9.5 M5 4 H9 V6.5 H5 Z M5 9 L6.5 7.5 M9.5 9 L8 7.5" stroke="#6a9955" stroke-width="1.23" fill="none" stroke-linecap="round" stroke-linejoin="round"/><path transform="translate(263.45,136.22) scale(0.730)" d="M2 2 H7 M4 1 Q3 5 1 8 M3 5.5 Q5 4 6.5 5 Q7 8 4 9.5 M9 4 L5 6.5 Q4 9 9 9" stroke="#6a9955" stroke-width="1.23" fill="none" stroke-linecap="round" stroke-linejoin="round"/><path transform="translate(271.57,136.22) scale(0.730)" d="M1 2 H4 V8 H1 Z M1 5 H4 M5.5 1 H9 V9 Q9 9.8 7.5 9.5 M5.5 1 V6 Q5.5 8.5 4.5 9.5 M5.5 3.5 H9 M5.5 6 H9" stroke="#6a9955" stroke-width="1.23" fill="none" stroke-linecap="round" stroke-linejoin="round"/><path transform="translate(279.69,136.22) scale(0.730)" d="M1 1 H9 V9 H1 Z" stroke="#6a9955" stroke-width="1.23" fill="none" stroke-linecap="round" stroke-linejoin="round"/><path transform="translate(287.81,136.22) scale(0.730)" d="M1 1 H9 V9 H1 Z" stroke="#6a9955" stroke-width="1.23" fill="none" stroke-linecap="round" stroke-linejoin="round"/><path transform="translate(295.93,136.22) scale(0.730)" d="M1 1 H9 V9 H1 Z" stroke="#6a9955" stroke-width="1.23" fill="none" stroke-linecap="round" stroke-linejoin="round"/><path transform="translate(304.05,136.22) scale(0.730)" d="M1 1 H9 V9 H1 Z" stroke="#6a9955" stroke-width="1.23" fill="none" stroke-linecap="round" stroke-linejoin="round"/><path transform="translate(312.17,136.22) scale(0.730)" d="M1 1 H9 V9 H1 Z" stroke="#6a9955" stroke-width="1.23" fill="none" stroke-linecap="round" stroke-linejoin="round"/><path transform="translate(49.72,180.10) scale(0.730)" d="M4 1 Q3 4 1 6 M4 2.5 H8.5 Q7.5 7 3 9.5" stroke="#6a9955" stroke-width="1.23" fill="none" stroke-linecap="round" stroke-linejoin="round"/><path transform="translate(57.84,180.10) scale(0.730)" d="M2 1.5 H8 M1.5 4 H8.5 Q8 8 3 9.5" stroke="#6a9955" stroke-width="1.23" fill="none" stroke-linecap="round" stroke-linejoin="round"/><path transform="translate(65.96,180.10) scale(0.730)" d="M2 2 H8 Q6 7 1.5 9.5 M5.5 6 L9 9" stroke="#6a9955" stroke-width="1.23" fill="none" stroke-linecap="round" stroke-linejoin="round"/><path transform="translate(74.08,180.10) scale(0.730)" d="M4 1 Q3 3 1 5 M3.5 2 H8 Q7 6.5 2 9.5 M3.5 4.5 L7 6.5" stroke="#6a9955" stroke-width="1.23" fill="none" stroke-linecap="round" stroke-linejoin="round"/><path transform="translate(82.20,180.10) scale(0.730)" d="M3 1.5 V6 M7 1 V6 Q7 8.5 4 9.5" stroke="#6a9955" stroke-width="1.23" fill="none" stroke-linecap="round" stroke-linejoin="round"/><path transform="translate(90.32,180.10) scale(0.730)" d="M1.5 2 L3.5 3.5 M1.5 9 Q7 7 9 2" stroke="#6a9955" stroke-width="1.23" fill="none" stroke-linecap="round" stroke-linejoin="round"/><path transform="translate(98.44,180.10) scale(0.730)" d="M4 1 Q3 4 1 6 M4 2.5 H8 Q7 7 2.5 9.5 M8 0.4 L8.6 1.7 M9.3 0.2 L9.9 1.4" stroke="#6a9955" stroke-width="1.23" fill="none" stroke-linecap="round" stroke-linejoin="round"/><path transform="translate(106.56,180.10) scale(0.730)" d="M2.5 1 L1 4 L3.5 4 L1 7 H4 M2.5 7 V9.5 M5 3 H9.5 M7 1 V5 M5.5 6 H9 V9.5 H5.5 Z" stroke="#6a9955" stroke-width="1.23" fill="none" stroke-linecap="round" stroke-linejoin="round"/><path transform="translate(114.68,180.10) scale(0.730)" d="M2 1 H8 V5.5 H2 Z M2 3.2 H8 M5 1 V9.5 M1 6.8 H9 M5 6.8 L1.5 9.5 M5 6.8 L8.5 9.5" stroke="#6a9955" stroke-width="1.23" fill="none" stroke-linecap="round" stroke-linejoin="round"/><path transform="translate(122.80,180.10) scale(0.730)" d="M5 2 Q4.5 7.5 2.5 8.5 Q0.8 8 1 5.5 Q1.8 2 6 2 Q9.5 2.5 9 6 Q8.5 9 5.5 9.5" stroke="#6a9955" stroke-width="1.23" fill="none" stroke-linecap="round" stroke-linejoin="round"/><path transform="translate(130.92,180.10) scale(0.730)" d="M1 2 H9 M8 2 V9 Q8 9.8 6.5 9.3 M2 4 H5.5 V7 H2 Z" stroke="#6a9955" stroke-width="1.23" fill="none" stroke-linecap="round" stroke-linejoin="round"/><path transform="translate(139.04,180.10) scale(0.730)" d="M2 1 L3 2 M1 3 H3.5 Q2.5 6 1 7 M2.5 5 V9.5 M5 1 H9 V6 H5 Z M5 2.7 H9 M5 4.3 H9 M6 6 Q6 8.5 4.5 9.5 M8 6 V9 H9.5" stroke="#6a9955" stroke-width="1.23" fill="none" stroke-linecap="round" stroke-linejoin="round"/><path transform="translate(147.16,180.10) scale(0.730)" d="M3 1 Q2.5 4 1 6 M2.5 3.5 V9.5 M6 1 V8.5 Q6 9.3 8 9.3 H9.5 M9 3 L5 6" stroke="#6a9955" stroke-width="1.23" fill="none" stroke-linecap="round" stroke-linejoin="round"/><path d="M45.200000000000045 123.30 a3.3 3.3 0 0 1 2.1 5.8 v1.3 h-4.2 v-1.3 a3.3 3.3 0 0 1 2.1 -5.8 z" fill="#ffcc00"/><rect x="43.299999999999955" y="130.80" width="3.8" height="1.1" rx="0.5" fill="#ffcc00"/></svg></div><div class="a" style="left:607.8px;top:240px;width:147.4px;height:6.4px;background:#3d3d3d;"></div><div class="a" style="left:848px;top:40px;width:1px;height:207px;background:#161616;"></div><div class="a" style="left:878.3px;top:53.3px;width:7.7px;height:82.7px;background:#3a3a3a;"></div><div class="a" style="left:879px;top:106.2px;width:7px;height:2.4px;background:#8f7d10;"></div><div class="a" style="left:879px;top:178.5px;width:7px;height:2px;background:#5a5a2a;"></div><div class="a" style="left:681px;top:41.6px;width:105px;height:17.6px;background:#1f1f1f;box-shadow:0 0 3px rgba(0,0,0,.8);border:1px solid #2a2a2a;"></div><div class="a" style="left:568px;top:247px;width:318px;height:212px;background:#181818;"></div><div class="a" style="left:568px;top:247px;width:318px;height:1px;background:#2b2b2b;"></div><div class="tx" style="left:579.90px;top:251.90px;font-size:6.3px;line-height:12px;color:#9d9d9d;transform:scaleX(0.894);transform-origin:0 0;">PROBLEMS</div><div class="tx" style="left:625.00px;top:251.90px;font-size:6.3px;line-height:12px;color:#9d9d9d;transform:scaleX(0.904);transform-origin:0 0;">OUTPUT</div><div class="tx" style="left:662.20px;top:251.90px;font-size:6.3px;line-height:12px;color:#9d9d9d;transform:scaleX(0.901);transform-origin:0 0;">DEBUG CONSOLE</div><div class="tx" style="left:725.80px;top:251.90px;font-size:6.3px;line-height:12px;color:#e7e7e7;transform:scaleX(0.929);transform-origin:0 0;">TERMINAL</div><div class="a" style="left:725.3px;top:263.6px;width:31px;height:1px;background:#0078d4;"></div><div class="a" style="left:817px;top:266px;width:0.8px;height:192px;background:#2b2b2b;"></div><div class="a" style="left:817.5px;top:280px;width:68.5px;height:13px;background:#37373d;"></div><div class="a" style="left:817px;top:280px;width:0.9px;height:12.4px;background:#1d5b8c;"></div><div class="tx" style="left:834.00px;top:267.80px;font-size:7.0px;line-height:12px;color:#cccccc;transform:scaleX(1.101);transform-origin:0 0;">Python</div><div class="tx" style="left:862.00px;top:268.00px;font-size:6.6px;line-height:12px;color:#8c8c8c;transform:scaleX(0.981);transform-origin:0 0;">note...</div><div class="tx" style="left:834.00px;top:281.10px;font-size:7.0px;line-height:12px;color:#cccccc;transform:scaleX(1.052);transform-origin:0 0;">Python Deb...</div><div class="tx m" style="left:580.3px;top:272.80px;font-size:6.92px;line-height:9.2px;color:#cccccc;-webkit-text-stroke:0.05px #cccccc">conda activate base</div><div class="tx m" style="left:580.3px;top:282.05px;font-size:6.92px;line-height:9.2px;color:#cccccc;-webkit-text-stroke:0.05px #cccccc">(base) root@220d4ed358ad:/notebook02# conda activate b</div><div class="tx m" style="left:580.3px;top:291.30px;font-size:6.92px;line-height:9.2px;color:#cccccc;-webkit-text-stroke:0.05px #cccccc">ase</div><div class="tx m" style="left:580.3px;top:300.55px;font-size:6.92px;line-height:9.2px;color:#cccccc;-webkit-text-stroke:0.05px #cccccc">(base) root@220d4ed358ad:/notebook02#  /usr/bin/env /o</div><div class="tx m" style="left:580.3px;top:309.80px;font-size:6.92px;line-height:9.2px;color:#cccccc;-webkit-text-stroke:0.05px #cccccc">pt/conda/bin/python /root/.vscode-server/extensions/ms</div><div class="tx m" style="left:580.3px;top:319.05px;font-size:6.92px;line-height:9.2px;color:#cccccc;-webkit-text-stroke:0.05px #cccccc">-python.python-2023.16.0/pythonFiles/lib/python/debugp</div><div class="tx m" style="left:580.3px;top:328.30px;font-size:6.92px;line-height:9.2px;color:#cccccc;-webkit-text-stroke:0.05px #cccccc">y/adapter/../../debugpy/launcher 47837 -- /notebook02/</div><div class="tx m" style="left:580.3px;top:337.55px;font-size:6.92px;line-height:9.2px;color:#cccccc;-webkit-text-stroke:0.05px #cccccc">learning/K-means.py</div><div class="tx m" style="left:580.3px;top:346.80px;font-size:6.92px;line-height:9.2px;color:#cccccc;-webkit-text-stroke:0.05px #cccccc">Backend TkAgg is interactive backend. Turning interact</div><div class="tx m" style="left:580.3px;top:356.05px;font-size:6.92px;line-height:9.2px;color:#cccccc;-webkit-text-stroke:0.05px #cccccc">ive mode on.</div><div class="tx m" style="left:580.3px;top:365.30px;font-size:6.92px;line-height:9.2px;color:#cccccc;-webkit-text-stroke:0.05px #cccccc">(base) root@220d4ed358ad:/notebook02#  cd /notebook02</div><div class="tx m" style="left:580.3px;top:374.55px;font-size:6.92px;line-height:9.2px;color:#cccccc;-webkit-text-stroke:0.05px #cccccc">; /usr/bin/env /opt/conda/bin/python /root/.vscode-ser</div><div class="tx m" style="left:580.3px;top:383.80px;font-size:6.92px;line-height:9.2px;color:#cccccc;-webkit-text-stroke:0.05px #cccccc">ver/extensions/ms-python.python-2023.16.0/pythonFiles/</div><div class="tx m" style="left:580.3px;top:393.05px;font-size:6.92px;line-height:9.2px;color:#cccccc;-webkit-text-stroke:0.05px #cccccc">lib/python/debugpy/adapter/../../debugpy/launcher 4924</div><div class="tx m" style="left:580.3px;top:402.30px;font-size:6.92px;line-height:9.2px;color:#cccccc;-webkit-text-stroke:0.05px #cccccc">5 -- /notebook02/learning/K-means.py</div><div class="tx m" style="left:580.3px;top:411.55px;font-size:6.92px;line-height:9.2px;color:#cccccc;-webkit-text-stroke:0.05px #cccccc">Backend TkAgg is interactive backend. Turning interact</div><div class="tx m" style="left:580.3px;top:420.80px;font-size:6.92px;line-height:9.2px;color:#cccccc;-webkit-text-stroke:0.05px #cccccc">ive mode on.</div><div class="a" style="left:580.5px;top:430px;width:3.6px;height:7.8px;background:transparent;border:0.8px solid #aaaaaa;"></div><div class="a" style="left:443px;top:458.6px;width:443px;height:11px;background:#0078d4;"></div><div class="tx" style="left:458.50px;top:458.90px;font-size:6.9px;line-height:11px;color:#ffffff;transform:scaleX(1.002);transform-origin:0 0;">Container continuumio/anaconda3:latest (...</div><div class="tx" style="left:612.30px;top:458.90px;font-size:6.9px;line-height:11px;color:#ffffff;">0</div><div class="tx" style="left:627.30px;top:458.90px;font-size:6.9px;line-height:11px;color:#ffffff;">0</div><div class="tx" style="left:650.50px;top:458.90px;font-size:6.9px;line-height:11px;color:#ffffff;">4</div><div class="tx" style="left:704.80px;top:458.90px;font-size:6.9px;line-height:11px;color:#ffffff;transform:scaleX(0.951);transform-origin:0 0;">UTF-8</div><div class="tx" style="left:732.30px;top:458.90px;font-size:6.9px;line-height:11px;color:#ffffff;transform:scaleX(0.860);transform-origin:0 0;">CRLF</div><div class="tx" style="left:766.90px;top:458.90px;font-size:6.9px;line-height:11px;color:#ffffff;transform:scaleX(0.996);transform-origin:0 0;">Python</div><div class="tx" style="left:796.80px;top:458.90px;font-size:6.9px;line-height:11px;color:#ffffff;transform:scaleX(0.963);transform-origin:0 0;">3.11.3 (&#x27;base&#x27;: conda)</div><div class="a" style="left:470px;top:20px;width:0.8px;height:438px;background:#222222;"></div><svg width="886" height="469" style="left:0;top:0" viewBox="0 0 886 469"><path d="M11.96 5.40 L14.60 6.57 L14.60 13.63 L11.96 14.80 Z" fill="#2f9fea"/><path d="M12.35 6.08 L6.08 11.96 M12.35 14.12 L6.08 8.24" stroke="#2f9fea" stroke-width="1.67" stroke-linecap="round"/><path d="M5.29 8.34 L6.27 7.75 L7.25 10.10 L6.27 12.45 L5.29 11.86 Z" fill="#2f9fea"/><path d="M26.3 7.4 H35.2" stroke="#cccccc" stroke-width="0.8" fill="none" stroke-linecap="round" stroke-linejoin="round" /><path d="M26.3 10 H35.2" stroke="#cccccc" stroke-width="0.8" fill="none" stroke-linecap="round" stroke-linejoin="round" /><path d="M26.3 12.6 H35.2" stroke="#cccccc" stroke-width="0.8" fill="none" stroke-linecap="round" stroke-linejoin="round" /><path d="M98 10 H106 M98 10 L101.3 6.7 M98 10 L101.3 13.3" stroke="#cccccc" stroke-width="0.85" fill="none" stroke-linecap="round" stroke-linejoin="round" /><path d="M113.5 10 H121 M121 10 L117.7 6.7 M121 10 L117.7 13.3" stroke="#5a5a5a" stroke-width="0.85" fill="none" stroke-linecap="round" stroke-linejoin="round" /><circle cx="198" cy="8.6" r="2.8" stroke="#aaaaaa" stroke-width="0.8" fill="none"/><path d="M196 10.6 L193.3 13.3" stroke="#aaaaaa" stroke-width="0.9" fill="none" stroke-linecap="round" stroke-linejoin="round" /><rect x="306.6" y="5.6" width="8.6" height="8.6" rx="1" stroke="#bdbdbd" stroke-width="0.8" fill="none"/><rect x="307" y="6" width="3.3" height="7.8" fill="#cccccc"/><rect x="321.4" y="5.6" width="8.6" height="8.6" rx="1" stroke="#bdbdbd" stroke-width="0.8" fill="none"/><path d="M321.4 11.2 H330" stroke="#cccccc" stroke-width="0.8" fill="none" stroke-linecap="round" stroke-linejoin="round" /><rect x="336.2" y="5.6" width="8.6" height="8.6" rx="1" stroke="#bdbdbd" stroke-width="0.8" fill="none"/><path d="M340.5 5.6 V14.2" stroke="#cccccc" stroke-width="0.8" fill="none" stroke-linecap="round" stroke-linejoin="round" /><rect x="351.6" y="5.6" width="3.2" height="8.6" rx="0.8" stroke="#cccccc" stroke-width="0.8" fill="none"/><rect x="356.4" y="5.6" width="3.6" height="3.4" rx="0.8" stroke="#cccccc" stroke-width="0.8" fill="none"/><rect x="356.4" y="10.8" width="3.6" height="3.4" rx="0.8" stroke="#cccccc" stroke-width="0.8" fill="none"/><path d="M373.3 9.9 H379.8" stroke="#9a9a9a" stroke-width="0.8" fill="none" stroke-linecap="round" stroke-linejoin="round" /><rect x="399.2" y="6.6" width="6.3" height="6.3" stroke="#9a9a9a" stroke-width="0.8" fill="none"/><path d="M425.8 6.6 L432 12.8 M432 6.6 L425.8 12.8" stroke="#bdbdbd" stroke-width="0.85" fill="none" stroke-linecap="round" stroke-linejoin="round" /><path d="M11.4 27.3 H16.4 L19.5 30.4 V36.3 Q19.5 37.2 18.6 37.2 H11.4 Q10.6 37.2 10.6 36.3 V28.2 Q10.6 27.3 11.4 27.3 Z" stroke="#d7d7d7" stroke-width="0.95" fill="none" stroke-linecap="round" stroke-linejoin="round" /><path d="M16.2 27.5 V30.6 H19.3" stroke="#d7d7d7" stroke-width="0.75" fill="none" stroke-linecap="round" stroke-linejoin="round" /><path d="M10.6 30.6 H7.7 Q6.9 30.6 6.9 31.4 V40.3 Q6.9 41.1 7.7 41.1 H14.7 Q15.5 41.1 15.5 40.3 V37.2" stroke="#d7d7d7" stroke-width="0.95" fill="none" stroke-linecap="round" stroke-linejoin="round" /><circle cx="15.9" cy="59.8" r="4.8" stroke="#8a8a8a" stroke-width="0.95" fill="none"/><path d="M12.5 63.3 L8.7 67.2" stroke="#8a8a8a" stroke-width="1.1" fill="none" stroke-linecap="round" stroke-linejoin="round" /><circle cx="10.4" cy="84.3" r="2.1" stroke="#8a8a8a" stroke-width="1.0" fill="none"/><circle cx="16.4" cy="87.1" r="2.1" stroke="#8a8a8a" stroke-width="1.0" fill="none"/><circle cx="10.4" cy="94" r="2.1" stroke="#8a8a8a" stroke-width="1.0" fill="none"/><path d="M10.4 86.4 V91.9 M16.4 89.2 Q16.4 92 12 93" stroke="#8a8a8a" stroke-width="0.95" fill="none" stroke-linecap="round" stroke-linejoin="round" /><rect x="9.9" y="89.1" width="12.9" height="9.4" rx="4.7" fill="#0078d4"/><path d="M10 109.8 L20.2 116.2 L14.2 120 M10 109.8 V114.5" stroke="#8a8a8a" stroke-width="0.95" fill="none" stroke-linecap="round" stroke-linejoin="round" /><ellipse cx="9.2" cy="121.2" rx="2.3" ry="2.8" stroke="#8a8a8a" stroke-width="0.9" fill="none"/><path d="M6 119.5 H12.4 M6 122.5 H7 M11.4 122.5 H12.4 M7.5 118 L8.2 118.8 M10.9 118 L10.2 118.8" stroke="#8a8a8a" stroke-width="0.8" fill="none" stroke-linecap="round" stroke-linejoin="round" /><rect x="6.2" y="139.8" width="5.8" height="5.8" stroke="#8a8a8a" stroke-width="0.9" fill="none"/><rect x="6.2" y="145.5" width="5.8" height="5.8" stroke="#8a8a8a" stroke-width="0.9" fill="none"/><rect x="12" y="145.5" width="5.8" height="5.8" stroke="#8a8a8a" stroke-width="0.9" fill="none"/><rect x="14.7" y="137.9" width="5.5" height="5.5" rx="0.5" stroke="#8a8a8a" stroke-width="0.9" fill="none"/><path d="M13 176.8 H7 Q6.2 176.8 6.2 176 V168 Q6.2 167.2 7 167.2 H18.2 Q19 167.2 19 168 V172.5" stroke="#8a8a8a" stroke-width="0.9" fill="none" stroke-linecap="round" stroke-linejoin="round" /><path d="M8.5 179.3 H12.5" stroke="#8a8a8a" stroke-width="0.9" fill="none" stroke-linecap="round" stroke-linejoin="round" /><circle cx="16.3" cy="176.2" r="3.2" stroke="#8a8a8a" stroke-width="0.9" fill="none"/><path d="M14.9 176.3 L15.9 177.3 L17.7 175.3" stroke="#8a8a8a" stroke-width="0.8" fill="none" stroke-linecap="round" stroke-linejoin="round" /><path d="M10.2 194.2 H16.2 M11.2 194.2 V199.5 L7.8 205.8 Q7.6 206.5 8.3 206.5 H18.1 Q18.8 206.5 18.6 205.8 L15.2 199.5 V194.2 M9.8 202 H16.6" stroke="#8a8a8a" stroke-width="0.95" fill="none" stroke-linecap="round" stroke-linejoin="round" /><circle cx="13.2" cy="416.5" r="6.9" stroke="#8a8a8a" stroke-width="0.95" fill="none"/><circle cx="13.2" cy="414.3" r="2.4" stroke="#8a8a8a" stroke-width="0.95" fill="none"/><path d="M8.60 421.50 Q9.20 417.70 13.20 417.70 Q17.20 417.70 17.80 421.50" stroke="#8a8a8a" stroke-width="0.95" fill="none" stroke-linecap="round" stroke-linejoin="round" /><path d="M17.57 442.79 L19.56 443.04 L19.56 445.76 L17.57 446.01 L17.40 446.42 L18.63 448.01 L16.71 449.93 L15.12 448.70 L14.71 448.87 L14.46 450.86 L11.74 450.86 L11.49 448.87 L11.08 448.70 L9.49 449.93 L7.57 448.01 L8.80 446.42 L8.63 446.01 L6.64 445.76 L6.64 443.04 L8.63 442.79 L8.80 442.38 L7.57 440.79 L9.49 438.87 L11.08 440.10 L11.49 439.93 L11.74 437.94 L14.46 437.94 L14.71 439.93 L15.12 440.10 L16.71 438.87 L18.63 440.79 L17.40 442.38 Z" stroke="#8a8a8a" stroke-width="0.95" fill="none" stroke-linecap="round" stroke-linejoin="round" /><circle cx="13.1" cy="444.4" r="1.9799999999999998" stroke="#8a8a8a" stroke-width="0.95" fill="none"/><circle cx="108.55" cy="30.5" r="0" stroke="#cccccc" stroke-width="0" fill="#cccccc"/><circle cx="108.55" cy="30.5" r="0.75" fill="#cccccc"/><circle cx="111.69999999999999" cy="30.5" r="0" stroke="#cccccc" stroke-width="0" fill="#cccccc"/><circle cx="111.70" cy="30.5" r="0.75" fill="#cccccc"/><circle cx="114.85" cy="30.5" r="0" stroke="#cccccc" stroke-width="0" fill="#cccccc"/><circle cx="114.85" cy="30.5" r="0.75" fill="#cccccc"/><path d="M30.2 45.50 L33.00 48.30 L35.8 45.50" stroke="#cccccc" stroke-width="0.9" fill="none" stroke-linecap="round" stroke-linejoin="round" /><path d="M38 58.15 L40.90 61.05 L43.8 58.15" stroke="#cccccc" stroke-width="0.9" fill="none" stroke-linecap="round" stroke-linejoin="round" /><circle cx="112.6" cy="59.8" r="1.9" fill="#b89a18"/><rect x="41.90" y="70.30" width="4.59" height="4.59" rx="1.38" fill="#4fa6d6" transform="rotate(45 44.20 72.60)"/><path d="M43.00 71.40 L45.40 73.80" stroke="#3b86b0" stroke-width="0.6"/><path d="M31.6 436.90 L34.6 439.90 L31.6 442.90" stroke="#cccccc" stroke-width="0.9" fill="none" stroke-linecap="round" stroke-linejoin="round" /><path d="M31.6 449.20 L34.6 452.20 L31.6 455.20" stroke="#cccccc" stroke-width="0.9" fill="none" stroke-linecap="round" stroke-linejoin="round" /><path d="M137.81 25.69 L140.40 26.84 L140.40 33.76 L137.81 34.91 Z" fill="#2f9fea"/><path d="M138.20 26.36 L132.05 32.12 M138.20 34.24 L132.05 28.48" stroke="#2f9fea" stroke-width="1.63" stroke-linecap="round"/><path d="M131.28 28.57 L132.24 28.00 L133.20 30.30 L132.24 32.60 L131.28 32.03 Z" fill="#2f9fea"/><rect x="203.34" y="27.74" width="4.73" height="4.73" rx="1.42" fill="#4fa6d6" transform="rotate(45 205.70 30.10)"/><path d="M204.50 28.90 L206.90 31.30" stroke="#3b86b0" stroke-width="0.6"/><path d="M264.4 27.8 L269.6 33 M269.6 27.8 L264.4 33" stroke="#e0e0e0" stroke-width="1.05" fill="none" stroke-linecap="round" stroke-linejoin="round" /><path d="M388.6 26.6 L395.2 30.5 L388.6 34.4 Z" stroke="#cccccc" stroke-width="0.85" fill="none" stroke-linecap="round" stroke-linejoin="round" /><path d="M400 29.30 L402.00 31.30 L404 29.30" stroke="#cccccc" stroke-width="0.8" fill="none" stroke-linecap="round" stroke-linejoin="round" /><rect x="410.6" y="26.6" width="8.4" height="8" rx="1" stroke="#cccccc" stroke-width="0.9" fill="none"/><path d="M414.8 26.6 V34.6" stroke="#cccccc" stroke-width="0.9" fill="none" stroke-linecap="round" stroke-linejoin="round" /><circle cx="426.55" cy="30.7" r="0" stroke="#cccccc" stroke-width="0" fill="#cccccc"/><circle cx="426.55" cy="30.7" r="0.75" fill="#cccccc"/><circle cx="429.6" cy="30.7" r="0" stroke="#cccccc" stroke-width="0" fill="#cccccc"/><circle cx="429.60" cy="30.7" r="0.75" fill="#cccccc"/><circle cx="432.65" cy="30.7" r="0" stroke="#cccccc" stroke-width="0" fill="#cccccc"/><circle cx="432.65" cy="30.7" r="0.75" fill="#cccccc"/><path d="M166.3 44.50 L169.3 47.50 L166.3 50.50" stroke="#a9a9a9" stroke-width="0.8" fill="none" stroke-linecap="round" stroke-linejoin="round" /><rect x="173.81" y="45.11" width="4.19" height="4.19" rx="1.26" fill="#4fa6d6" transform="rotate(45 175.90 47.20)"/><path d="M174.70 46.00 L177.10 48.40" stroke="#3b86b0" stroke-width="0.6"/><path d="M225.3 44.50 L228.3 47.50 L225.3 50.50" stroke="#a9a9a9" stroke-width="0.8" fill="none" stroke-linecap="round" stroke-linejoin="round" /><rect x="409" y="52.9" width="25.80" height="3.73" fill="#b39300"/><rect x="409.00" y="53.00" width="2.52" height="0.75" fill="#c586c0" opacity="0.55"/><rect x="411.94" y="53.00" width="2.10" height="0.75" fill="#d4d4d4" opacity="0.55"/><rect x="414.46" y="53.00" width="0.84" height="0.75" fill="#c586c0" opacity="0.55"/><rect x="415.72" y="53.00" width="0.84" height="0.75" fill="#4ec9b0" opacity="0.55"/><rect x="409.00" y="53.93" width="2.52" height="0.75" fill="#c586c0" opacity="0.55"/><rect x="411.94" y="53.93" width="7.14" height="0.75" fill="#4ec9b0" opacity="0.55"/><rect x="419.50" y="53.93" width="0.84" height="0.75" fill="#c586c0" opacity="0.55"/><rect x="420.76" y="53.93" width="1.26" height="0.75" fill="#4ec9b0" opacity="0.55"/><rect x="409.00" y="54.87" width="1.68" height="0.75" fill="#c586c0" opacity="0.55"/><rect x="411.10" y="54.87" width="6.30" height="0.75" fill="#4ec9b0" opacity="0.55"/><rect x="417.82" y="54.87" width="2.52" height="0.75" fill="#c586c0" opacity="0.55"/><rect x="420.76" y="54.87" width="2.52" height="0.75" fill="#4ec9b0" opacity="0.55"/><rect x="409.00" y="55.80" width="1.68" height="0.75" fill="#c586c0" opacity="0.55"/><rect x="411.10" y="55.80" width="6.72" height="0.75" fill="#4ec9b0" opacity="0.55"/><rect x="418.24" y="55.80" width="2.52" height="0.75" fill="#c586c0" opacity="0.55"/><rect x="421.18" y="55.80" width="4.20" height="0.75" fill="#dcdcaa" opacity="0.55"/><rect x="409.00" y="57.66" width="0.42" height="0.75" fill="#6a9955" opacity="0.55"/><rect x="409.00" y="58.60" width="3.78" height="0.75" fill="#9cdcfe" opacity="0.55"/><rect x="413.20" y="58.60" width="0.42" height="0.75" fill="#d4d4d4" opacity="0.55"/><rect x="414.04" y="58.60" width="1.68" height="0.75" fill="#b5cea8" opacity="0.55"/><rect x="409.00" y="59.53" width="2.94" height="0.75" fill="#9cdcfe" opacity="0.55"/><rect x="412.36" y="59.53" width="0.42" height="0.75" fill="#d4d4d4" opacity="0.55"/><rect x="413.20" y="59.53" width="4.20" height="0.75" fill="#dcdcaa" opacity="0.55"/><rect x="417.40" y="59.53" width="0.42" height="0.75" fill="#ffd700" opacity="0.55"/><rect x="417.82" y="59.53" width="3.78" height="0.75" fill="#9cdcfe" opacity="0.55"/><rect x="421.60" y="59.53" width="0.42" height="0.75" fill="#d4d4d4" opacity="0.55"/><rect x="422.02" y="59.53" width="3.78" height="0.75" fill="#9cdcfe" opacity="0.55"/><rect x="425.80" y="59.53" width="0.42" height="0.75" fill="#d4d4d4" opacity="0.55"/><rect x="426.64" y="59.53" width="2.94" height="0.75" fill="#9cdcfe" opacity="0.55"/><rect x="429.58" y="59.53" width="0.42" height="0.75" fill="#d4d4d4" opacity="0.55"/><rect x="430.00" y="59.53" width="0.42" height="0.75" fill="#b5cea8" opacity="0.55"/><rect x="430.42" y="59.53" width="0.42" height="0.75" fill="#d4d4d4" opacity="0.55"/><rect x="431.26" y="59.53" width="3.54" height="0.75" fill="#9cdcfe" opacity="0.55"/><rect x="409.00" y="60.46" width="0.42" height="0.75" fill="#4fc1ff" opacity="0.55"/><rect x="409.84" y="60.46" width="0.42" height="0.75" fill="#d4d4d4" opacity="0.55"/><rect x="410.68" y="60.46" width="2.94" height="0.75" fill="#9cdcfe" opacity="0.55"/><rect x="413.62" y="60.46" width="0.42" height="0.75" fill="#ffd700" opacity="0.55"/><rect x="414.04" y="60.46" width="0.42" height="0.75" fill="#b5cea8" opacity="0.55"/><rect x="414.46" y="60.46" width="0.42" height="0.75" fill="#ffd700" opacity="0.55"/><rect x="409.00" y="62.33" width="0.42" height="0.75" fill="#6a9955" opacity="0.55"/><rect x="409.84" y="62.33" width="2.94" height="0.75" fill="#6a9955" opacity="0.55"/><rect x="409.00" y="63.26" width="2.52" height="0.75" fill="#9cdcfe" opacity="0.55"/><rect x="411.94" y="63.26" width="0.42" height="0.75" fill="#d4d4d4" opacity="0.55"/><rect x="412.78" y="63.26" width="2.52" height="0.75" fill="#4ec9b0" opacity="0.55"/><rect x="415.30" y="63.26" width="0.42" height="0.75" fill="#ffd700" opacity="0.55"/><rect x="415.72" y="63.26" width="4.20" height="0.75" fill="#9cdcfe" opacity="0.55"/><rect x="419.92" y="63.26" width="0.42" height="0.75" fill="#d4d4d4" opacity="0.55"/><rect x="420.34" y="63.26" width="0.42" height="0.75" fill="#b5cea8" opacity="0.55"/><rect x="420.76" y="63.26" width="0.42" height="0.75" fill="#d4d4d4" opacity="0.55"/><rect x="421.60" y="63.26" width="2.52" height="0.75" fill="#9cdcfe" opacity="0.55"/><rect x="424.12" y="63.26" width="0.42" height="0.75" fill="#d4d4d4" opacity="0.55"/><rect x="424.54" y="63.26" width="0.84" height="0.75" fill="#b5cea8" opacity="0.55"/><rect x="425.38" y="63.26" width="0.42" height="0.75" fill="#ffd700" opacity="0.55"/><rect x="426.64" y="63.26" width="0.42" height="0.75" fill="#6a9955" opacity="0.55"/><rect x="427.48" y="63.26" width="2.52" height="0.75" fill="#6a9955" opacity="0.55"/><rect x="409.00" y="64.20" width="2.52" height="0.75" fill="#9cdcfe" opacity="0.55"/><rect x="411.52" y="64.20" width="0.42" height="0.75" fill="#d4d4d4" opacity="0.55"/><rect x="411.94" y="64.20" width="1.26" height="0.75" fill="#dcdcaa" opacity="0.55"/><rect x="413.20" y="64.20" width="0.42" height="0.75" fill="#ffd700" opacity="0.55"/><rect x="413.62" y="64.20" width="0.42" height="0.75" fill="#4fc1ff" opacity="0.55"/><rect x="414.04" y="64.20" width="0.42" height="0.75" fill="#ffd700" opacity="0.55"/><rect x="409.00" y="65.13" width="3.36" height="0.75" fill="#9cdcfe" opacity="0.55"/><rect x="412.78" y="65.13" width="0.42" height="0.75" fill="#d4d4d4" opacity="0.55"/><rect x="413.62" y="65.13" width="2.52" height="0.75" fill="#9cdcfe" opacity="0.55"/><rect x="416.14" y="65.13" width="0.42" height="0.75" fill="#d4d4d4" opacity="0.55"/><rect x="416.56" y="65.13" width="2.94" height="0.75" fill="#dcdcaa" opacity="0.55"/><rect x="419.50" y="65.13" width="0.42" height="0.75" fill="#ffd700" opacity="0.55"/><rect x="419.92" y="65.13" width="0.42" height="0.75" fill="#4fc1ff" opacity="0.55"/><rect x="420.34" y="65.13" width="0.42" height="0.75" fill="#ffd700" opacity="0.55"/><rect x="409.00" y="66.99" width="0.42" height="0.75" fill="#6a9955" opacity="0.55"/><rect x="409.00" y="67.93" width="1.26" height="0.75" fill="#4ec9b0" opacity="0.55"/><rect x="410.26" y="67.93" width="0.42" height="0.75" fill="#d4d4d4" opacity="0.55"/><rect x="410.68" y="67.93" width="2.94" height="0.75" fill="#dcdcaa" opacity="0.55"/><rect x="413.62" y="67.93" width="0.42" height="0.75" fill="#ffd700" opacity="0.55"/><rect x="414.04" y="67.93" width="0.42" height="0.75" fill="#4fc1ff" opacity="0.55"/><rect x="414.46" y="67.93" width="0.42" height="0.75" fill="#da70d6" opacity="0.55"/><rect x="414.88" y="67.93" width="0.84" height="0.75" fill="#d4d4d4" opacity="0.55"/><rect x="416.14" y="67.93" width="0.42" height="0.75" fill="#b5cea8" opacity="0.55"/><rect x="416.56" y="67.93" width="0.42" height="0.75" fill="#da70d6" opacity="0.55"/><rect x="416.98" y="67.93" width="0.42" height="0.75" fill="#d4d4d4" opacity="0.55"/><rect x="417.82" y="67.93" width="0.42" height="0.75" fill="#4fc1ff" opacity="0.55"/><rect x="418.24" y="67.93" width="0.42" height="0.75" fill="#da70d6" opacity="0.55"/><rect x="418.66" y="67.93" width="0.84" height="0.75" fill="#d4d4d4" opacity="0.55"/><rect x="419.92" y="67.93" width="0.42" height="0.75" fill="#b5cea8" opacity="0.55"/><rect x="420.34" y="67.93" width="0.42" height="0.75" fill="#da70d6" opacity="0.55"/><rect x="420.76" y="67.93" width="0.42" height="0.75" fill="#d4d4d4" opacity="0.55"/><rect x="421.60" y="67.93" width="0.42" height="0.75" fill="#9cdcfe" opacity="0.55"/><rect x="422.02" y="67.93" width="0.42" height="0.75" fill="#d4d4d4" opacity="0.55"/><rect x="422.44" y="67.93" width="3.36" height="0.75" fill="#9cdcfe" opacity="0.55"/><rect x="425.80" y="67.93" width="0.42" height="0.75" fill="#d4d4d4" opacity="0.55"/><rect x="426.64" y="67.93" width="0.42" height="0.75" fill="#9cdcfe" opacity="0.55"/><rect x="427.06" y="67.93" width="0.42" height="0.75" fill="#d4d4d4" opacity="0.55"/><rect x="427.48" y="67.93" width="0.84" height="0.75" fill="#b5cea8" opacity="0.55"/><rect x="428.32" y="67.93" width="0.42" height="0.75" fill="#d4d4d4" opacity="0.55"/><rect x="429.16" y="67.93" width="1.68" height="0.75" fill="#9cdcfe" opacity="0.55"/><rect x="430.84" y="67.93" width="0.42" height="0.75" fill="#d4d4d4" opacity="0.55"/><rect x="431.26" y="67.93" width="3.54" height="0.75" fill="#ce9178" opacity="0.55"/><rect x="409.00" y="69.79" width="2.94" height="0.75" fill="#9cdcfe" opacity="0.55"/><rect x="412.36" y="69.79" width="0.42" height="0.75" fill="#d4d4d4" opacity="0.55"/><rect x="413.20" y="69.79" width="2.52" height="0.75" fill="#9cdcfe" opacity="0.55"/><rect x="415.72" y="69.79" width="0.42" height="0.75" fill="#d4d4d4" opacity="0.55"/><rect x="416.14" y="69.79" width="6.72" height="0.75" fill="#9cdcfe" opacity="0.55"/><rect x="409.00" y="70.73" width="1.26" height="0.75" fill="#4ec9b0" opacity="0.55"/><rect x="410.26" y="70.73" width="0.42" height="0.75" fill="#d4d4d4" opacity="0.55"/><rect x="410.68" y="70.73" width="2.94" height="0.75" fill="#dcdcaa" opacity="0.55"/><rect x="413.62" y="70.73" width="0.42" height="0.75" fill="#ffd700" opacity="0.55"/><rect x="414.04" y="70.73" width="2.94" height="0.75" fill="#9cdcfe" opacity="0.55"/><rect x="416.98" y="70.73" width="0.42" height="0.75" fill="#da70d6" opacity="0.55"/><rect x="417.40" y="70.73" width="0.84" height="0.75" fill="#d4d4d4" opacity="0.55"/><rect x="418.66" y="70.73" width="0.42" height="0.75" fill="#b5cea8" opacity="0.55"/><rect x="419.08" y="70.73" width="0.42" height="0.75" fill="#da70d6" opacity="0.55"/><rect x="419.50" y="70.73" width="0.42" height="0.75" fill="#d4d4d4" opacity="0.55"/><rect x="420.34" y="70.73" width="2.94" height="0.75" fill="#9cdcfe" opacity="0.55"/><rect x="423.28" y="70.73" width="0.42" height="0.75" fill="#da70d6" opacity="0.55"/><rect x="423.70" y="70.73" width="0.84" height="0.75" fill="#d4d4d4" opacity="0.55"/><rect x="424.96" y="70.73" width="0.42" height="0.75" fill="#b5cea8" opacity="0.55"/><rect x="425.38" y="70.73" width="0.42" height="0.75" fill="#da70d6" opacity="0.55"/><rect x="425.80" y="70.73" width="0.42" height="0.75" fill="#d4d4d4" opacity="0.55"/><rect x="426.64" y="70.73" width="0.42" height="0.75" fill="#9cdcfe" opacity="0.55"/><rect x="427.06" y="70.73" width="0.42" height="0.75" fill="#d4d4d4" opacity="0.55"/><rect x="427.48" y="70.73" width="2.10" height="0.75" fill="#ce9178" opacity="0.55"/><rect x="429.58" y="70.73" width="0.42" height="0.75" fill="#d4d4d4" opacity="0.55"/><rect x="430.42" y="70.73" width="0.42" height="0.75" fill="#9cdcfe" opacity="0.55"/><rect x="430.84" y="70.73" width="0.42" height="0.75" fill="#d4d4d4" opacity="0.55"/><rect x="431.26" y="70.73" width="1.26" height="0.75" fill="#b5cea8" opacity="0.55"/><rect x="432.52" y="70.73" width="0.42" height="0.75" fill="#ffd700" opacity="0.55"/><rect x="409.00" y="71.66" width="1.26" height="0.75" fill="#4ec9b0" opacity="0.55"/><rect x="410.26" y="71.66" width="0.42" height="0.75" fill="#d4d4d4" opacity="0.55"/><rect x="410.68" y="71.66" width="2.10" height="0.75" fill="#dcdcaa" opacity="0.55"/><rect x="412.78" y="71.66" width="0.42" height="0.75" fill="#ffd700" opacity="0.55"/><rect x="413.20" y="71.66" width="3.36" height="0.75" fill="#ce9178" opacity="0.55"/><rect x="416.98" y="71.66" width="4.62" height="0.75" fill="#ce9178" opacity="0.55"/><rect x="421.60" y="71.66" width="0.42" height="0.75" fill="#ffd700" opacity="0.55"/><rect x="409.00" y="72.59" width="1.26" height="0.75" fill="#4ec9b0" opacity="0.55"/><rect x="410.26" y="72.59" width="0.42" height="0.75" fill="#d4d4d4" opacity="0.55"/><rect x="410.68" y="72.59" width="2.52" height="0.75" fill="#dcdcaa" opacity="0.55"/><rect x="413.20" y="72.59" width="0.42" height="0.75" fill="#ffd700" opacity="0.55"/><rect x="413.62" y="72.59" width="3.36" height="0.75" fill="#ce9178" opacity="0.55"/><rect x="417.40" y="72.59" width="0.84" height="0.75" fill="#ce9178" opacity="0.55"/><rect x="418.24" y="72.59" width="0.42" height="0.75" fill="#ffd700" opacity="0.55"/><rect x="409.00" y="73.53" width="1.26" height="0.75" fill="#4ec9b0" opacity="0.55"/><rect x="410.26" y="73.53" width="0.42" height="0.75" fill="#d4d4d4" opacity="0.55"/><rect x="410.68" y="73.53" width="2.52" height="0.75" fill="#dcdcaa" opacity="0.55"/><rect x="413.20" y="73.53" width="0.42" height="0.75" fill="#ffd700" opacity="0.55"/><rect x="413.62" y="73.53" width="3.36" height="0.75" fill="#ce9178" opacity="0.55"/><rect x="417.40" y="73.53" width="0.84" height="0.75" fill="#ce9178" opacity="0.55"/><rect x="418.24" y="73.53" width="0.42" height="0.75" fill="#ffd700" opacity="0.55"/><rect x="409.00" y="74.46" width="1.26" height="0.75" fill="#4ec9b0" opacity="0.55"/><rect x="410.26" y="74.46" width="0.42" height="0.75" fill="#d4d4d4" opacity="0.55"/><rect x="410.68" y="74.46" width="1.68" height="0.75" fill="#dcdcaa" opacity="0.55"/><rect x="412.36" y="74.46" width="0.84" height="0.75" fill="#ffd700" opacity="0.55"/><rect x="409.84" y="57.66" width="9.24" height="0.75" fill="#6a9955" opacity="0.55"/><rect x="413.20" y="62.33" width="7.56" height="0.75" fill="#6a9955" opacity="0.55"/><rect x="430.00" y="63.26" width="4.80" height="0.75" fill="#6a9955" opacity="0.55"/><rect x="409.84" y="66.99" width="10.92" height="0.75" fill="#6a9955" opacity="0.55"/><path d="M7.00 462.6 L9.50 465 L7.10 467.4" stroke="#ffffff" stroke-width="1.0" fill="none" stroke-linecap="round" stroke-linejoin="round" /><path d="M11.90 460.9 L10.20 463 L11.90 464.9" stroke="#ffffff" stroke-width="1.0" fill="none" stroke-linecap="round" stroke-linejoin="round" /><circle cx="24.2" cy="461.5" r="1.3" stroke="#cccccc" stroke-width="0.8" fill="none"/><circle cx="24.2" cy="467" r="1.3" stroke="#cccccc" stroke-width="0.8" fill="none"/><circle cx="28.6" cy="461.5" r="1.3" stroke="#cccccc" stroke-width="0.8" fill="none"/><path d="M24.2 462.8 V465.7 M28.6 462.8 Q28.6 464.8 25.3 465.8" stroke="#cccccc" stroke-width="0.8" fill="none" stroke-linecap="round" stroke-linejoin="round" /><path d="M54.5 463.6 A3.7 3.7 0 0 1 61.3 462 M61.8 463.9 A3.7 3.7 0 0 1 55 465.6 M61.3 462 L61.5 460.6 M61.3 462 L59.8 462.1 M55 465.6 L54.8 467 M55 465.6 L56.5 465.5" stroke="#cccccc" stroke-width="0.8" fill="none" stroke-linecap="round" stroke-linejoin="round" /><circle cx="74" cy="463.8" r="3.6" stroke="#cccccc" stroke-width="0.8" fill="none"/><path d="M72.5 462.3 L75.5 465.3 M75.5 462.3 L72.5 465.3" stroke="#cccccc" stroke-width="0.8" fill="none" stroke-linecap="round" stroke-linejoin="round" /><path d="M89.8 460 L93.9 467.4 H85.7 Z M89.8 462.5 V465 M89.8 466 V466.3" stroke="#cccccc" stroke-width="0.8" fill="none" stroke-linecap="round" stroke-linejoin="round" /><path d="M109.5 460.5 L113 464 L116.5 460.5 M113 464 V467.5 M111 467.5 H115 M110 462.5 Q113 458.5 116 462.5" stroke="#cccccc" stroke-width="0.8" fill="none" stroke-linecap="round" stroke-linejoin="round" /><path d="M296.8 460.5 Q295.6 460.5 295.6 461.7 V463 Q295.6 463.8 294.9 463.8 Q295.6 463.8 295.6 464.6 V466 Q295.6 467.2 296.8 467.2" stroke="#cccccc" stroke-width="0.8" fill="none" stroke-linecap="round" stroke-linejoin="round" /><path d="M300.6 460.5 Q301.8 460.5 301.8 461.7 V463 Q301.8 463.8 302.5 463.8 Q301.8 463.8 301.8 464.6 V466 Q301.8 467.2 300.6 467.2" stroke="#cccccc" stroke-width="0.8" fill="none" stroke-linecap="round" stroke-linejoin="round" /><circle cx="387.5" cy="462.6" r="2.6" stroke="#cccccc" stroke-width="0.8" fill="none"/><path d="M386.3 465.3 V467.5 H388.7 V465.3" stroke="#cccccc" stroke-width="0.8" fill="none" stroke-linecap="round" stroke-linejoin="round" /><path d="M427.5 466 H434 M428.3 466 V463 A2.4 2.4 0 0 1 433.2 463 V466 M429.8 467.5 H431.7" stroke="#cccccc" stroke-width="0.85" fill="none" stroke-linecap="round" stroke-linejoin="round" /><rect x="852.50" y="53.10" width="2.52" height="0.75" fill="#c586c0" opacity="0.55"/><rect x="855.44" y="53.10" width="2.10" height="0.75" fill="#d4d4d4" opacity="0.55"/><rect x="857.96" y="53.10" width="0.84" height="0.75" fill="#c586c0" opacity="0.55"/><rect x="859.22" y="53.10" width="0.84" height="0.75" fill="#4ec9b0" opacity="0.55"/><rect x="852.50" y="54.03" width="2.52" height="0.75" fill="#c586c0" opacity="0.55"/><rect x="855.44" y="54.03" width="7.14" height="0.75" fill="#4ec9b0" opacity="0.55"/><rect x="863.00" y="54.03" width="0.84" height="0.75" fill="#c586c0" opacity="0.55"/><rect x="864.26" y="54.03" width="1.26" height="0.75" fill="#4ec9b0" opacity="0.55"/><rect x="852.50" y="54.97" width="1.68" height="0.75" fill="#c586c0" opacity="0.55"/><rect x="854.60" y="54.97" width="6.30" height="0.75" fill="#4ec9b0" opacity="0.55"/><rect x="861.32" y="54.97" width="2.52" height="0.75" fill="#c586c0" opacity="0.55"/><rect x="864.26" y="54.97" width="2.52" height="0.75" fill="#4ec9b0" opacity="0.55"/><rect x="852.50" y="55.90" width="1.68" height="0.75" fill="#c586c0" opacity="0.55"/><rect x="854.60" y="55.90" width="6.72" height="0.75" fill="#4ec9b0" opacity="0.55"/><rect x="861.74" y="55.90" width="2.52" height="0.75" fill="#c586c0" opacity="0.55"/><rect x="864.68" y="55.90" width="4.20" height="0.75" fill="#dcdcaa" opacity="0.55"/><rect x="852.50" y="57.77" width="0.42" height="0.75" fill="#6a9955" opacity="0.55"/><rect x="852.50" y="58.70" width="3.78" height="0.75" fill="#9cdcfe" opacity="0.55"/><rect x="856.70" y="58.70" width="0.42" height="0.75" fill="#d4d4d4" opacity="0.55"/><rect x="857.54" y="58.70" width="1.68" height="0.75" fill="#b5cea8" opacity="0.55"/><rect x="852.50" y="59.63" width="2.94" height="0.75" fill="#9cdcfe" opacity="0.55"/><rect x="855.86" y="59.63" width="0.42" height="0.75" fill="#d4d4d4" opacity="0.55"/><rect x="856.70" y="59.63" width="4.20" height="0.75" fill="#dcdcaa" opacity="0.55"/><rect x="860.90" y="59.63" width="0.42" height="0.75" fill="#ffd700" opacity="0.55"/><rect x="861.32" y="59.63" width="3.78" height="0.75" fill="#9cdcfe" opacity="0.55"/><rect x="865.10" y="59.63" width="0.42" height="0.75" fill="#d4d4d4" opacity="0.55"/><rect x="865.52" y="59.63" width="3.78" height="0.75" fill="#9cdcfe" opacity="0.55"/><rect x="869.30" y="59.63" width="0.42" height="0.75" fill="#d4d4d4" opacity="0.55"/><rect x="870.14" y="59.63" width="2.94" height="0.75" fill="#9cdcfe" opacity="0.55"/><rect x="873.08" y="59.63" width="0.42" height="0.75" fill="#d4d4d4" opacity="0.55"/><rect x="873.50" y="59.63" width="0.42" height="0.75" fill="#b5cea8" opacity="0.55"/><rect x="873.92" y="59.63" width="0.42" height="0.75" fill="#d4d4d4" opacity="0.55"/><rect x="874.76" y="59.63" width="3.24" height="0.75" fill="#9cdcfe" opacity="0.55"/><rect x="852.50" y="60.56" width="0.42" height="0.75" fill="#4fc1ff" opacity="0.55"/><rect x="853.34" y="60.56" width="0.42" height="0.75" fill="#d4d4d4" opacity="0.55"/><rect x="854.18" y="60.56" width="2.94" height="0.75" fill="#9cdcfe" opacity="0.55"/><rect x="857.12" y="60.56" width="0.42" height="0.75" fill="#ffd700" opacity="0.55"/><rect x="857.54" y="60.56" width="0.42" height="0.75" fill="#b5cea8" opacity="0.55"/><rect x="857.96" y="60.56" width="0.42" height="0.75" fill="#ffd700" opacity="0.55"/><rect x="852.50" y="62.43" width="0.42" height="0.75" fill="#6a9955" opacity="0.55"/><rect x="853.34" y="62.43" width="2.94" height="0.75" fill="#6a9955" opacity="0.55"/><rect x="852.50" y="63.36" width="2.52" height="0.75" fill="#9cdcfe" opacity="0.55"/><rect x="855.44" y="63.36" width="0.42" height="0.75" fill="#d4d4d4" opacity="0.55"/><rect x="856.28" y="63.36" width="2.52" height="0.75" fill="#4ec9b0" opacity="0.55"/><rect x="858.80" y="63.36" width="0.42" height="0.75" fill="#ffd700" opacity="0.55"/><rect x="859.22" y="63.36" width="4.20" height="0.75" fill="#9cdcfe" opacity="0.55"/><rect x="863.42" y="63.36" width="0.42" height="0.75" fill="#d4d4d4" opacity="0.55"/><rect x="863.84" y="63.36" width="0.42" height="0.75" fill="#b5cea8" opacity="0.55"/><rect x="864.26" y="63.36" width="0.42" height="0.75" fill="#d4d4d4" opacity="0.55"/><rect x="865.10" y="63.36" width="2.52" height="0.75" fill="#9cdcfe" opacity="0.55"/><rect x="867.62" y="63.36" width="0.42" height="0.75" fill="#d4d4d4" opacity="0.55"/><rect x="868.04" y="63.36" width="0.84" height="0.75" fill="#b5cea8" opacity="0.55"/><rect x="868.88" y="63.36" width="0.42" height="0.75" fill="#ffd700" opacity="0.55"/><rect x="870.14" y="63.36" width="0.42" height="0.75" fill="#6a9955" opacity="0.55"/><rect x="870.98" y="63.36" width="2.52" height="0.75" fill="#6a9955" opacity="0.55"/><rect x="852.50" y="64.30" width="2.52" height="0.75" fill="#9cdcfe" opacity="0.55"/><rect x="855.02" y="64.30" width="0.42" height="0.75" fill="#d4d4d4" opacity="0.55"/><rect x="855.44" y="64.30" width="1.26" height="0.75" fill="#dcdcaa" opacity="0.55"/><rect x="856.70" y="64.30" width="0.42" height="0.75" fill="#ffd700" opacity="0.55"/><rect x="857.12" y="64.30" width="0.42" height="0.75" fill="#4fc1ff" opacity="0.55"/><rect x="857.54" y="64.30" width="0.42" height="0.75" fill="#ffd700" opacity="0.55"/><rect x="852.50" y="65.23" width="3.36" height="0.75" fill="#9cdcfe" opacity="0.55"/><rect x="856.28" y="65.23" width="0.42" height="0.75" fill="#d4d4d4" opacity="0.55"/><rect x="857.12" y="65.23" width="2.52" height="0.75" fill="#9cdcfe" opacity="0.55"/><rect x="859.64" y="65.23" width="0.42" height="0.75" fill="#d4d4d4" opacity="0.55"/><rect x="860.06" y="65.23" width="2.94" height="0.75" fill="#dcdcaa" opacity="0.55"/><rect x="863.00" y="65.23" width="0.42" height="0.75" fill="#ffd700" opacity="0.55"/><rect x="863.42" y="65.23" width="0.42" height="0.75" fill="#4fc1ff" opacity="0.55"/><rect x="863.84" y="65.23" width="0.42" height="0.75" fill="#ffd700" opacity="0.55"/><rect x="852.50" y="67.09" width="0.42" height="0.75" fill="#6a9955" opacity="0.55"/><rect x="852.50" y="68.03" width="1.26" height="0.75" fill="#4ec9b0" opacity="0.55"/><rect x="853.76" y="68.03" width="0.42" height="0.75" fill="#d4d4d4" opacity="0.55"/><rect x="854.18" y="68.03" width="2.94" height="0.75" fill="#dcdcaa" opacity="0.55"/><rect x="857.12" y="68.03" width="0.42" height="0.75" fill="#ffd700" opacity="0.55"/><rect x="857.54" y="68.03" width="0.42" height="0.75" fill="#4fc1ff" opacity="0.55"/><rect x="857.96" y="68.03" width="0.42" height="0.75" fill="#da70d6" opacity="0.55"/><rect x="858.38" y="68.03" width="0.84" height="0.75" fill="#d4d4d4" opacity="0.55"/><rect x="859.64" y="68.03" width="0.42" height="0.75" fill="#b5cea8" opacity="0.55"/><rect x="860.06" y="68.03" width="0.42" height="0.75" fill="#da70d6" opacity="0.55"/><rect x="860.48" y="68.03" width="0.42" height="0.75" fill="#d4d4d4" opacity="0.55"/><rect x="861.32" y="68.03" width="0.42" height="0.75" fill="#4fc1ff" opacity="0.55"/><rect x="861.74" y="68.03" width="0.42" height="0.75" fill="#da70d6" opacity="0.55"/><rect x="862.16" y="68.03" width="0.84" height="0.75" fill="#d4d4d4" opacity="0.55"/><rect x="863.42" y="68.03" width="0.42" height="0.75" fill="#b5cea8" opacity="0.55"/><rect x="863.84" y="68.03" width="0.42" height="0.75" fill="#da70d6" opacity="0.55"/><rect x="864.26" y="68.03" width="0.42" height="0.75" fill="#d4d4d4" opacity="0.55"/><rect x="865.10" y="68.03" width="0.42" height="0.75" fill="#9cdcfe" opacity="0.55"/><rect x="865.52" y="68.03" width="0.42" height="0.75" fill="#d4d4d4" opacity="0.55"/><rect x="865.94" y="68.03" width="3.36" height="0.75" fill="#9cdcfe" opacity="0.55"/><rect x="869.30" y="68.03" width="0.42" height="0.75" fill="#d4d4d4" opacity="0.55"/><rect x="870.14" y="68.03" width="0.42" height="0.75" fill="#9cdcfe" opacity="0.55"/><rect x="870.56" y="68.03" width="0.42" height="0.75" fill="#d4d4d4" opacity="0.55"/><rect x="870.98" y="68.03" width="0.84" height="0.75" fill="#b5cea8" opacity="0.55"/><rect x="871.82" y="68.03" width="0.42" height="0.75" fill="#d4d4d4" opacity="0.55"/><rect x="872.66" y="68.03" width="1.68" height="0.75" fill="#9cdcfe" opacity="0.55"/><rect x="874.34" y="68.03" width="0.42" height="0.75" fill="#d4d4d4" opacity="0.55"/><rect x="874.76" y="68.03" width="3.24" height="0.75" fill="#ce9178" opacity="0.55"/><rect x="852.50" y="69.89" width="2.94" height="0.75" fill="#9cdcfe" opacity="0.55"/><rect x="855.86" y="69.89" width="0.42" height="0.75" fill="#d4d4d4" opacity="0.55"/><rect x="856.70" y="69.89" width="2.52" height="0.75" fill="#9cdcfe" opacity="0.55"/><rect x="859.22" y="69.89" width="0.42" height="0.75" fill="#d4d4d4" opacity="0.55"/><rect x="859.64" y="69.89" width="6.72" height="0.75" fill="#9cdcfe" opacity="0.55"/><rect x="852.50" y="70.83" width="1.26" height="0.75" fill="#4ec9b0" opacity="0.55"/><rect x="853.76" y="70.83" width="0.42" height="0.75" fill="#d4d4d4" opacity="0.55"/><rect x="854.18" y="70.83" width="2.94" height="0.75" fill="#dcdcaa" opacity="0.55"/><rect x="857.12" y="70.83" width="0.42" height="0.75" fill="#ffd700" opacity="0.55"/><rect x="857.54" y="70.83" width="2.94" height="0.75" fill="#9cdcfe" opacity="0.55"/><rect x="860.48" y="70.83" width="0.42" height="0.75" fill="#da70d6" opacity="0.55"/><rect x="860.90" y="70.83" width="0.84" height="0.75" fill="#d4d4d4" opacity="0.55"/><rect x="862.16" y="70.83" width="0.42" height="0.75" fill="#b5cea8" opacity="0.55"/><rect x="862.58" y="70.83" width="0.42" height="0.75" fill="#da70d6" opacity="0.55"/><rect x="863.00" y="70.83" width="0.42" height="0.75" fill="#d4d4d4" opacity="0.55"/><rect x="863.84" y="70.83" width="2.94" height="0.75" fill="#9cdcfe" opacity="0.55"/><rect x="866.78" y="70.83" width="0.42" height="0.75" fill="#da70d6" opacity="0.55"/><rect x="867.20" y="70.83" width="0.84" height="0.75" fill="#d4d4d4" opacity="0.55"/><rect x="868.46" y="70.83" width="0.42" height="0.75" fill="#b5cea8" opacity="0.55"/><rect x="868.88" y="70.83" width="0.42" height="0.75" fill="#da70d6" opacity="0.55"/><rect x="869.30" y="70.83" width="0.42" height="0.75" fill="#d4d4d4" opacity="0.55"/><rect x="870.14" y="70.83" width="0.42" height="0.75" fill="#9cdcfe" opacity="0.55"/><rect x="870.56" y="70.83" width="0.42" height="0.75" fill="#d4d4d4" opacity="0.55"/><rect x="870.98" y="70.83" width="2.10" height="0.75" fill="#ce9178" opacity="0.55"/><rect x="873.08" y="70.83" width="0.42" height="0.75" fill="#d4d4d4" opacity="0.55"/><rect x="873.92" y="70.83" width="0.42" height="0.75" fill="#9cdcfe" opacity="0.55"/><rect x="874.34" y="70.83" width="0.42" height="0.75" fill="#d4d4d4" opacity="0.55"/><rect x="874.76" y="70.83" width="1.26" height="0.75" fill="#b5cea8" opacity="0.55"/><rect x="876.02" y="70.83" width="0.42" height="0.75" fill="#ffd700" opacity="0.55"/><rect x="852.50" y="71.76" width="1.26" height="0.75" fill="#4ec9b0" opacity="0.55"/><rect x="853.76" y="71.76" width="0.42" height="0.75" fill="#d4d4d4" opacity="0.55"/><rect x="854.18" y="71.76" width="2.10" height="0.75" fill="#dcdcaa" opacity="0.55"/><rect x="856.28" y="71.76" width="0.42" height="0.75" fill="#ffd700" opacity="0.55"/><rect x="856.70" y="71.76" width="3.36" height="0.75" fill="#ce9178" opacity="0.55"/><rect x="860.48" y="71.76" width="4.62" height="0.75" fill="#ce9178" opacity="0.55"/><rect x="865.10" y="71.76" width="0.42" height="0.75" fill="#ffd700" opacity="0.55"/><rect x="852.50" y="72.69" width="1.26" height="0.75" fill="#4ec9b0" opacity="0.55"/><rect x="853.76" y="72.69" width="0.42" height="0.75" fill="#d4d4d4" opacity="0.55"/><rect x="854.18" y="72.69" width="2.52" height="0.75" fill="#dcdcaa" opacity="0.55"/><rect x="856.70" y="72.69" width="0.42" height="0.75" fill="#ffd700" opacity="0.55"/><rect x="857.12" y="72.69" width="3.36" height="0.75" fill="#ce9178" opacity="0.55"/><rect x="860.90" y="72.69" width="0.84" height="0.75" fill="#ce9178" opacity="0.55"/><rect x="861.74" y="72.69" width="0.42" height="0.75" fill="#ffd700" opacity="0.55"/><rect x="852.50" y="73.63" width="1.26" height="0.75" fill="#4ec9b0" opacity="0.55"/><rect x="853.76" y="73.63" width="0.42" height="0.75" fill="#d4d4d4" opacity="0.55"/><rect x="854.18" y="73.63" width="2.52" height="0.75" fill="#dcdcaa" opacity="0.55"/><rect x="856.70" y="73.63" width="0.42" height="0.75" fill="#ffd700" opacity="0.55"/><rect x="857.12" y="73.63" width="3.36" height="0.75" fill="#ce9178" opacity="0.55"/><rect x="860.90" y="73.63" width="0.84" height="0.75" fill="#ce9178" opacity="0.55"/><rect x="861.74" y="73.63" width="0.42" height="0.75" fill="#ffd700" opacity="0.55"/><rect x="852.50" y="74.56" width="1.26" height="0.75" fill="#4ec9b0" opacity="0.55"/><rect x="853.76" y="74.56" width="0.42" height="0.75" fill="#d4d4d4" opacity="0.55"/><rect x="854.18" y="74.56" width="1.68" height="0.75" fill="#dcdcaa" opacity="0.55"/><rect x="855.86" y="74.56" width="0.84" height="0.75" fill="#ffd700" opacity="0.55"/><rect x="853.34" y="57.77" width="9.24" height="0.75" fill="#6a9955" opacity="0.55"/><rect x="856.70" y="62.43" width="7.56" height="0.75" fill="#6a9955" opacity="0.55"/><rect x="873.50" y="63.36" width="4.50" height="0.75" fill="#6a9955" opacity="0.55"/><rect x="853.34" y="67.09" width="10.92" height="0.75" fill="#6a9955" opacity="0.55"/><path d="M455.23 5.30 L457.90 6.49 L457.90 13.61 L455.23 14.80 Z" fill="#2f9fea"/><path d="M455.62 5.99 L449.29 11.93 M455.62 14.11 L449.29 8.17" stroke="#2f9fea" stroke-width="1.68" stroke-linecap="round"/><path d="M448.50 8.27 L449.49 7.67 L450.48 10.05 L449.49 12.43 L448.50 11.83 Z" fill="#2f9fea"/><path d="M469 7.4 H478.6" stroke="#cccccc" stroke-width="0.8" fill="none" stroke-linecap="round" stroke-linejoin="round" /><path d="M469 10 H478.6" stroke="#cccccc" stroke-width="0.8" fill="none" stroke-linecap="round" stroke-linejoin="round" /><path d="M469 12.6 H478.6" stroke="#cccccc" stroke-width="0.8" fill="none" stroke-linecap="round" stroke-linejoin="round" /><path d="M541.3 10 H548.3 M541.3 10 L544.6 6.7 M541.3 10 L544.6 13.3" stroke="#cccccc" stroke-width="0.85" fill="none" stroke-linecap="round" stroke-linejoin="round" /><path d="M556.8 10 H563.6 M563.6 10 L560.3 6.7 M563.6 10 L560.3 13.3" stroke="#5a5a5a" stroke-width="0.85" fill="none" stroke-linecap="round" stroke-linejoin="round" /><circle cx="579" cy="8.6" r="2.9" stroke="#cccccc" stroke-width="0.85" fill="none"/><path d="M577 10.7 L574.8 13.3" stroke="#cccccc" stroke-width="0.95" fill="none" stroke-linecap="round" stroke-linejoin="round" /><rect x="749.8" y="5.6" width="8.6" height="8.6" rx="1" stroke="#d0d0d0" stroke-width="0.85" fill="none"/><rect x="750.2" y="6" width="3.3" height="7.8" fill="#d0d0d0"/><rect x="764.6" y="5.6" width="8.6" height="8.6" rx="1" stroke="#d0d0d0" stroke-width="0.85" fill="none"/><rect x="765" y="10.5" width="7.8" height="3.3" fill="#d0d0d0"/><rect x="780" y="5.6" width="8.6" height="8.6" rx="1" stroke="#d0d0d0" stroke-width="0.85" fill="none"/><path d="M784.3 5.6 V14.2" stroke="#d0d0d0" stroke-width="0.85" fill="none" stroke-linecap="round" stroke-linejoin="round" /><rect x="795.4" y="5.6" width="3.2" height="8.6" rx="0.8" stroke="#d0d0d0" stroke-width="0.85" fill="none"/><rect x="800.2" y="5.6" width="3.6" height="3.4" rx="0.8" stroke="#d0d0d0" stroke-width="0.85" fill="none"/><rect x="800.2" y="10.8" width="3.6" height="3.4" rx="0.8" stroke="#d0d0d0" stroke-width="0.85" fill="none"/><path d="M816.7 9.9 H822.9" stroke="#cccccc" stroke-width="0.8" fill="none" stroke-linecap="round" stroke-linejoin="round" /><rect x="842.5" y="6.7" width="6.3" height="6.3" stroke="#cccccc" stroke-width="0.8" fill="none"/><path d="M869.4 6.7 L875.4 12.7 M875.4 6.7 L869.4 12.7" stroke="#d7d7d7" stroke-width="0.9" fill="none" stroke-linecap="round" stroke-linejoin="round" /><path d="M454.7 27.3 H459.7 L462.8 30.4 V36.3 Q462.8 37.2 461.90000000000003 37.2 H454.7 Q453.90000000000003 37.2 453.90000000000003 36.3 V28.2 Q453.90000000000003 27.3 454.7 27.3 Z" stroke="#8a8a8a" stroke-width="0.95" fill="none" stroke-linecap="round" stroke-linejoin="round" /><path d="M459.5 27.5 V30.6 H462.6" stroke="#8a8a8a" stroke-width="0.75" fill="none" stroke-linecap="round" stroke-linejoin="round" /><path d="M453.90000000000003 30.6 H451.0 Q450.2 30.6 450.2 31.4 V40.3 Q450.2 41.1 451.0 41.1 H458.0 Q458.8 41.1 458.8 40.3 V37.2" stroke="#8a8a8a" stroke-width="0.95" fill="none" stroke-linecap="round" stroke-linejoin="round" /><circle cx="459.2" cy="59.8" r="4.8" stroke="#8a8a8a" stroke-width="0.95" fill="none"/><path d="M455.8 63.3 L452.0 67.2" stroke="#8a8a8a" stroke-width="1.1" fill="none" stroke-linecap="round" stroke-linejoin="round" /><circle cx="453.7" cy="84.3" r="2.1" stroke="#8a8a8a" stroke-width="1.0" fill="none"/><circle cx="459.7" cy="87.1" r="2.1" stroke="#8a8a8a" stroke-width="1.0" fill="none"/><circle cx="453.7" cy="94" r="2.1" stroke="#8a8a8a" stroke-width="1.0" fill="none"/><path d="M453.7 86.4 V91.9 M459.7 89.2 Q459.7 92 455.3 93" stroke="#8a8a8a" stroke-width="0.95" fill="none" stroke-linecap="round" stroke-linejoin="round" /><path d="M453.3 109.8 L463.5 116.2 L457.5 120 M453.3 109.8 V114.5" stroke="#d7d7d7" stroke-width="0.95" fill="none" stroke-linecap="round" stroke-linejoin="round" /><ellipse cx="452.5" cy="121.2" rx="2.3" ry="2.8" stroke="#d7d7d7" stroke-width="0.9" fill="none"/><path d="M449.3 119.5 H455.7 M449.3 122.5 H450.3 M454.7 122.5 H455.7" stroke="#d7d7d7" stroke-width="0.8" fill="none" stroke-linecap="round" stroke-linejoin="round" /><circle cx="461.3" cy="122.2" r="3.6" fill="#0078d4"/><rect x="449.5" y="139.8" width="5.8" height="5.8" stroke="#8a8a8a" stroke-width="0.9" fill="none"/><rect x="449.5" y="145.5" width="5.8" height="5.8" stroke="#8a8a8a" stroke-width="0.9" fill="none"/><rect x="455.3" y="145.5" width="5.8" height="5.8" stroke="#8a8a8a" stroke-width="0.9" fill="none"/><rect x="458.0" y="137.9" width="5.5" height="5.5" rx="0.5" stroke="#8a8a8a" stroke-width="0.9" fill="none"/><path d="M456.3 176.8 H450.3 Q449.5 176.8 449.5 176 V168 Q449.5 167.2 450.3 167.2 H461.5 Q462.3 167.2 462.3 168 V172.5" stroke="#8a8a8a" stroke-width="0.9" fill="none" stroke-linecap="round" stroke-linejoin="round" /><path d="M451.8 179.3 H455.8" stroke="#8a8a8a" stroke-width="0.9" fill="none" stroke-linecap="round" stroke-linejoin="round" /><circle cx="459.6" cy="176.2" r="3.2" stroke="#8a8a8a" stroke-width="0.9" fill="none"/><path d="M458.2 176.3 L459.2 177.3 L461.0 175.3" stroke="#8a8a8a" stroke-width="0.8" fill="none" stroke-linecap="round" stroke-linejoin="round" /><path d="M453.5 194.2 H459.5 M454.5 194.2 V199.5 L451.1 205.8 Q450.90000000000003 206.5 451.6 206.5 H461.40000000000003 Q462.1 206.5 461.90000000000003 205.8 L458.5 199.5 V194.2 M453.1 202 H459.90000000000003" stroke="#8a8a8a" stroke-width="0.95" fill="none" stroke-linecap="round" stroke-linejoin="round" /><path d="M449.3 228.2 H460.4 Q461.4 226.6 463.4 227.2 Q462 228.4 461.8 229.2 Q460.2 233.7 455 233.7 Q449.8 233.6 449.3 228.2 Z" fill="#9a9a9a"/><path d="M451.3 228.4 V225.8 Q451.3 225.3 451.8 225.3 H455.6 V223.6 Q455.6 223.1 456.1 223.1 H457.4 Q457.9 223.1 457.9 223.6 V228.4 Z" fill="#8a8a8a"/><circle cx="456.5" cy="416.5" r="6.9" stroke="#8a8a8a" stroke-width="0.95" fill="none"/><circle cx="456.5" cy="414.3" r="2.4" stroke="#8a8a8a" stroke-width="0.95" fill="none"/><path d="M451.90 421.50 Q452.50 417.70 456.50 417.70 Q460.50 417.70 461.10 421.50" stroke="#8a8a8a" stroke-width="0.95" fill="none" stroke-linecap="round" stroke-linejoin="round" /><path d="M460.87 442.69 L462.86 442.94 L462.86 445.66 L460.87 445.91 L460.70 446.32 L461.93 447.91 L460.01 449.83 L458.42 448.60 L458.01 448.77 L457.76 450.76 L455.04 450.76 L454.79 448.77 L454.38 448.60 L452.79 449.83 L450.87 447.91 L452.10 446.32 L451.93 445.91 L449.94 445.66 L449.94 442.94 L451.93 442.69 L452.10 442.28 L450.87 440.69 L452.79 438.77 L454.38 440.00 L454.79 439.83 L455.04 437.84 L457.76 437.84 L458.01 439.83 L458.42 440.00 L460.01 438.77 L461.93 440.69 L460.70 442.28 Z" stroke="#8a8a8a" stroke-width="0.95" fill="none" stroke-linecap="round" stroke-linejoin="round" /><circle cx="456.40000000000003" cy="444.3" r="1.9799999999999998" stroke="#8a8a8a" stroke-width="0.95" fill="none"/><path d="M488.9 26.6 L494.7 30.5 L488.9 34.4 Z" stroke="#89d185" stroke-width="0.95" fill="none" stroke-linecap="round" stroke-linejoin="round" /><path d="M538.3 29.00 L540.90 31.60 L543.5 29.00" stroke="#cccccc" stroke-width="0.8" fill="none" stroke-linecap="round" stroke-linejoin="round" /><path d="M561.48 29.43 L562.81 29.59 L562.81 31.41 L561.48 31.57 L561.37 31.85 L562.19 32.90 L560.90 34.19 L559.85 33.37 L559.57 33.48 L559.41 34.81 L557.59 34.81 L557.43 33.48 L557.15 33.37 L556.10 34.19 L554.81 32.90 L555.63 31.85 L555.52 31.57 L554.19 31.41 L554.19 29.59 L555.52 29.43 L555.63 29.15 L554.81 28.10 L556.10 26.81 L557.15 27.63 L557.43 27.52 L557.59 26.19 L559.41 26.19 L559.57 27.52 L559.85 27.63 L560.90 26.81 L562.19 28.10 L561.37 29.15 Z" stroke="#cccccc" stroke-width="0.85" fill="none" stroke-linecap="round" stroke-linejoin="round" /><circle cx="558.5" cy="30.5" r="1.32" stroke="#cccccc" stroke-width="0.85" fill="none"/><path d="M473.3 45.38 L476.15 48.22 L479 45.38" stroke="#cccccc" stroke-width="0.9" fill="none" stroke-linecap="round" stroke-linejoin="round" /><path d="M478.8 58.15 L481.70 61.05 L484.6 58.15" stroke="#cccccc" stroke-width="0.9" fill="none" stroke-linecap="round" stroke-linejoin="round" /><path d="M485.2 69.40 L488.2 72.40 L485.2 75.40" stroke="#cccccc" stroke-width="0.85" fill="none" stroke-linecap="round" stroke-linejoin="round" /><path d="M485.2 82.20 L488.2 85.20 L485.2 88.20" stroke="#cccccc" stroke-width="0.85" fill="none" stroke-linecap="round" stroke-linejoin="round" /><path d="M485.2 95.00 L488.2 98.00 L485.2 101.00" stroke="#cccccc" stroke-width="0.85" fill="none" stroke-linecap="round" stroke-linejoin="round" /><path d="M484 109.35 L486.50 111.85 L489 109.35" stroke="#cccccc" stroke-width="0.85" fill="none" stroke-linecap="round" stroke-linejoin="round" /><path d="M490.2 120 L493.2 123 L490.2 126" stroke="#cccccc" stroke-width="0.85" fill="none"/><path d="M490.2 132.8 L493.2 135.8 L490.2 138.8" stroke="#cccccc" stroke-width="0.85" fill="none"/><path d="M490.2 145.6 L493.2 148.6 L490.2 151.6" stroke="#cccccc" stroke-width="0.85" fill="none"/><path d="M490.2 183.9 L493.2 186.9 L490.2 189.9" stroke="#cccccc" stroke-width="0.85" fill="none"/><path d="M473.6 193.20 L476.40 196.00 L479.2 193.20" stroke="#cccccc" stroke-width="0.9" fill="none" stroke-linecap="round" stroke-linejoin="round" /><path d="M473.6 275.20 L476.40 278.00 L479.2 275.20" stroke="#cccccc" stroke-width="0.9" fill="none" stroke-linecap="round" stroke-linejoin="round" /><path d="M473.6 400.00 L476.40 402.80 L479.2 400.00" stroke="#cccccc" stroke-width="0.9" fill="none" stroke-linecap="round" stroke-linejoin="round" /><rect x="485.2" y="410.60" width="7.2" height="7.2" rx="1" fill="#f0f0f0"/><rect x="485.2" y="423.30" width="7.2" height="7.2" rx="1" fill="#0078d4"/><path d="M486.7 426.90 L488.3 428.60 L491 425.10" stroke="#ffffff" stroke-width="0.9" fill="none" stroke-linecap="round" stroke-linejoin="round" /><rect x="485.2" y="436.00" width="7.2" height="7.2" rx="1" fill="#f0f0f0"/><rect x="485.2" y="448.70" width="7.2" height="7.2" rx="1" fill="#0078d4"/><path d="M486.7 452.30 L488.3 454.00 L491 450.50" stroke="#ffffff" stroke-width="0.9" fill="none" stroke-linecap="round" stroke-linejoin="round" /><circle cx="477.4" cy="452.3" r="2.1" fill="#e51400"/><circle cx="556.8" cy="452.3" r="4.6" fill="#5a5a5a"/><rect x="577.74" y="27.74" width="4.73" height="4.73" rx="1.42" fill="#4fa6d6" transform="rotate(45 580.10 30.10)"/><path d="M578.90 28.90 L581.30 31.30" stroke="#3b86b0" stroke-width="0.6"/><path d="M631 28 L636 33 M636 28 L631 33" stroke="#e0e0e0" stroke-width="1.05" fill="none" stroke-linecap="round" stroke-linejoin="round" /><rect x="651.3" y="27" width="5" height="1.1" fill="#9d9d9d"/><rect x="651.3" y="29.3" width="5" height="1.1" fill="#9d9d9d"/><rect x="651.3" y="31.6" width="5" height="1.1" fill="#9d9d9d"/><rect x="651.3" y="33.9" width="3" height="1.1" fill="#9d9d9d"/><path d="M830.6 26.6 L837 30.5 L830.6 34.4 Z" stroke="#cccccc" stroke-width="0.85" fill="none" stroke-linecap="round" stroke-linejoin="round" /><rect x="829.3" y="31.5" width="3.6" height="3.2" rx="0.8" stroke="#cccccc" stroke-width="0.8" fill="#181818"/><path d="M843.5 29.30 L845.50 31.30 L847.5 29.30" stroke="#cccccc" stroke-width="0.8" fill="none" stroke-linecap="round" stroke-linejoin="round" /><rect x="853.8" y="26.6" width="8.4" height="8" rx="1" stroke="#cccccc" stroke-width="0.9" fill="none"/><path d="M858 26.6 V34.6" stroke="#cccccc" stroke-width="0.9" fill="none" stroke-linecap="round" stroke-linejoin="round" /><circle cx="869.95" cy="30.7" r="0" stroke="#cccccc" stroke-width="0" fill="#cccccc"/><circle cx="869.95" cy="30.7" r="0.75" fill="#cccccc"/><circle cx="873.0" cy="30.7" r="0" stroke="#cccccc" stroke-width="0" fill="#cccccc"/><circle cx="873.00" cy="30.7" r="0.75" fill="#cccccc"/><circle cx="876.05" cy="30.7" r="0" stroke="#cccccc" stroke-width="0" fill="#cccccc"/><circle cx="876.05" cy="30.7" r="0.75" fill="#cccccc"/><path d="M608.3 44.50 L611.3 47.50 L608.3 50.50" stroke="#a9a9a9" stroke-width="0.8" fill="none" stroke-linecap="round" stroke-linejoin="round" /><rect x="618.61" y="45.11" width="4.19" height="4.19" rx="1.26" fill="#4fa6d6" transform="rotate(45 620.70 47.20)"/><path d="M619.50 46.00 L621.90 48.40" stroke="#3b86b0" stroke-width="0.6"/><path d="M668 44.50 L671 47.50 L668 50.50" stroke="#a9a9a9" stroke-width="0.8" fill="none" stroke-linecap="round" stroke-linejoin="round" /><rect x="674.5" y="44.5" width="5.5" height="6" rx="1" stroke="#4fa0e0" stroke-width="0.9" fill="none"/><rect x="688.3" y="47.7" width="1.2" height="1.2" fill="#6a6a6a"/><rect x="688.3" y="49.900000000000006" width="1.2" height="1.2" fill="#6a6a6a"/><rect x="688.3" y="52.1" width="1.2" height="1.2" fill="#6a6a6a"/><rect x="690.5999999999999" y="47.7" width="1.2" height="1.2" fill="#6a6a6a"/><rect x="690.5999999999999" y="49.900000000000006" width="1.2" height="1.2" fill="#6a6a6a"/><rect x="690.5999999999999" y="52.1" width="1.2" height="1.2" fill="#6a6a6a"/><path d="M697.5 46 V54.4 M699.8 46 L705.6 50.2 L699.8 54.4 Z" stroke="#75beff" stroke-width="0.95" fill="none" stroke-linecap="round" stroke-linejoin="round" /><path d="M712.2 50.4 Q713 45.8 717.4 46.6 Q719.8 47.2 720.4 49.6 M720.4 46.8 V49.8 H717.6" stroke="#75beff" stroke-width="0.95" fill="none" stroke-linecap="round" stroke-linejoin="round" /><circle cx="716.4" cy="53.4" r="1.3" fill="#75beff"/><path d="M730.8 45.6 V51.4 M728.5 49.2 L730.8 51.5 L733.1 49.2" stroke="#75beff" stroke-width="0.95" fill="none" stroke-linecap="round" stroke-linejoin="round" /><circle cx="730.8" cy="54" r="1.3" fill="#75beff"/><path d="M746.2 52.2 V46.2 M743.9 48.4 L746.2 46.1 L748.5 48.4" stroke="#75beff" stroke-width="0.95" fill="none" stroke-linecap="round" stroke-linejoin="round" /><circle cx="746.2" cy="54" r="1.3" fill="#75beff"/><path d="M758.3 48 A3.6 3.6 0 1 0 761.4 46.4 M758 45.4 V48.2 H760.8" stroke="#89d185" stroke-width="1.0" fill="none" stroke-linecap="round" stroke-linejoin="round" /><rect x="772.4" y="46.3" width="7.6" height="7.6" rx="1.2" stroke="#f48771" stroke-width="1" fill="none"/><circle cx="574.5" cy="146.3" r="2.3" fill="#e51400"/><path d="M571.6 176.47 H575.2 L578.6 179.87 L575.2 183.27 H571.6 Z" stroke="#ffcc00" stroke-width="1.0" fill="none" stroke-linecap="round" stroke-linejoin="round" /><circle cx="766.35" cy="257.5" r="0" stroke="#cccccc" stroke-width="0" fill="#cccccc"/><circle cx="766.35" cy="257.5" r="0.75" fill="#cccccc"/><circle cx="769.4000000000001" cy="257.5" r="0" stroke="#cccccc" stroke-width="0" fill="#cccccc"/><circle cx="769.40" cy="257.5" r="0.75" fill="#cccccc"/><circle cx="772.45" cy="257.5" r="0" stroke="#cccccc" stroke-width="0" fill="#cccccc"/><circle cx="772.45" cy="257.5" r="0.75" fill="#cccccc"/><path d="M816.2 257.4 H822.6 M819.4 254.2 V260.6" stroke="#cccccc" stroke-width="0.9" fill="none" stroke-linecap="round" stroke-linejoin="round" /><path d="M825.3 256.40 L827.30 258.40 L829.3 256.40" stroke="#cccccc" stroke-width="0.8" fill="none" stroke-linecap="round" stroke-linejoin="round" /><circle cx="838.95" cy="257.5" r="0" stroke="#cccccc" stroke-width="0" fill="#cccccc"/><circle cx="838.95" cy="257.5" r="0.75" fill="#cccccc"/><circle cx="841.7" cy="257.5" r="0" stroke="#cccccc" stroke-width="0" fill="#cccccc"/><circle cx="841.70" cy="257.5" r="0.75" fill="#cccccc"/><circle cx="844.45" cy="257.5" r="0" stroke="#cccccc" stroke-width="0" fill="#cccccc"/><circle cx="844.45" cy="257.5" r="0.75" fill="#cccccc"/><path d="M854.8 259.3 L857.6 256.3 L860.4 259.3" stroke="#cccccc" stroke-width="0.9" fill="none" stroke-linecap="round" stroke-linejoin="round" /><path d="M869.8 254.4 L875.8 260.4 M875.8 254.4 L869.8 260.4" stroke="#cccccc" stroke-width="0.9" fill="none" stroke-linecap="round" stroke-linejoin="round" /><path d="M826 269.4 L829.3 271.3 V275.1 L826 277 L822.7 275.1 V271.3 Z" stroke="#cccccc" stroke-width="0.8" fill="none" stroke-linecap="round" stroke-linejoin="round" /><path d="M826 273.2 L829.3 271.3 V275.1 L826 277 Z" fill="#cccccc"/><path d="M828.26 285.56 L829.30 285.70 L829.30 287.30 L828.26 287.44 L828.15 287.68 L828.68 288.59 L827.44 289.58 L826.67 288.85 L826.42 288.91 L826.04 289.90 L824.49 289.54 L824.58 288.49 L824.37 288.33 L823.37 288.65 L822.68 287.21 L823.56 286.63 L823.56 286.37 L822.68 285.79 L823.37 284.35 L824.37 284.67 L824.58 284.51 L824.49 283.46 L826.04 283.10 L826.42 284.09 L826.67 284.15 L827.44 283.42 L828.68 284.41 L828.15 285.32 Z" stroke="#cccccc" stroke-width="0.8" fill="none" stroke-linecap="round" stroke-linejoin="round" /><circle cx="826" cy="286.5" r="1.02" stroke="#cccccc" stroke-width="0.8" fill="none"/><path d="M450.00 462.6 L452.50 465 L450.10 467.4" stroke="#ffffff" stroke-width="1.0" fill="none" stroke-linecap="round" stroke-linejoin="round" /><path d="M454.90 460.9 L453.20 463 L454.90 464.9" stroke="#ffffff" stroke-width="1.0" fill="none" stroke-linecap="round" stroke-linejoin="round" /><circle cx="607" cy="463.8" r="3.6" stroke="#ffffff" stroke-width="0.8" fill="none"/><path d="M605.5 462.3 L608.5 465.3 M608.5 462.3 L605.5 465.3" stroke="#ffffff" stroke-width="0.8" fill="none" stroke-linecap="round" stroke-linejoin="round" /><path d="M621.9 460 L626 467.4 H617.8 Z M621.9 462.5 V465 M621.9 466 V466.3" stroke="#ffffff" stroke-width="0.8" fill="none" stroke-linecap="round" stroke-linejoin="round" /><path d="M641.5 460.5 L645 464 L648.5 460.5 M645 464 V467.5 M643 467.5 H647 M642 462.5 Q645 458.5 648 462.5" stroke="#ffffff" stroke-width="0.8" fill="none" stroke-linecap="round" stroke-linejoin="round" /><path d="M664 460.6 L670.6 464 L664 467.4 Z" stroke="#ffffff" stroke-width="0.85" fill="none" stroke-linecap="round" stroke-linejoin="round" /><circle cx="665" cy="466" r="1.7" stroke="#ffffff" stroke-width="0.8" fill="none"/><path d="M759.4 460.6 Q756.8 460.6 756.8 463.8 Q756.8 467 759.4 467 M759.4 460.6 Q762 460.6 762 463.8 Q762 467 759.4 467" stroke="#ffffff" stroke-width="0.8" fill="none" stroke-linecap="round" stroke-linejoin="round" /><rect x="759" y="462" width="3" height="3.4" fill="#ffffff"/><path d="M872 461 H877.8 V465.8 H874.6 L872.6 467.6 V465.8 H872 Z" stroke="#ffffff" stroke-width="0.8" fill="none" stroke-linecap="round" stroke-linejoin="round" /></svg><div class="tx" style="left:10px;top:90.3px;width:12.8px;text-align:center;font-size:5.2px;line-height:7px;font-weight:bold;color:#fff">10K</div><div class="tx" style="left:458.7px;top:118.7px;width:5.2px;text-align:center;font-size:5px;line-height:7px;font-weight:bold;color:#fff">1</div><div class="tx" style="left:552px;top:448.8px;width:9.6px;text-align:center;font-size:5.6px;line-height:7px;color:#cccccc">9</div>
</body></html>
